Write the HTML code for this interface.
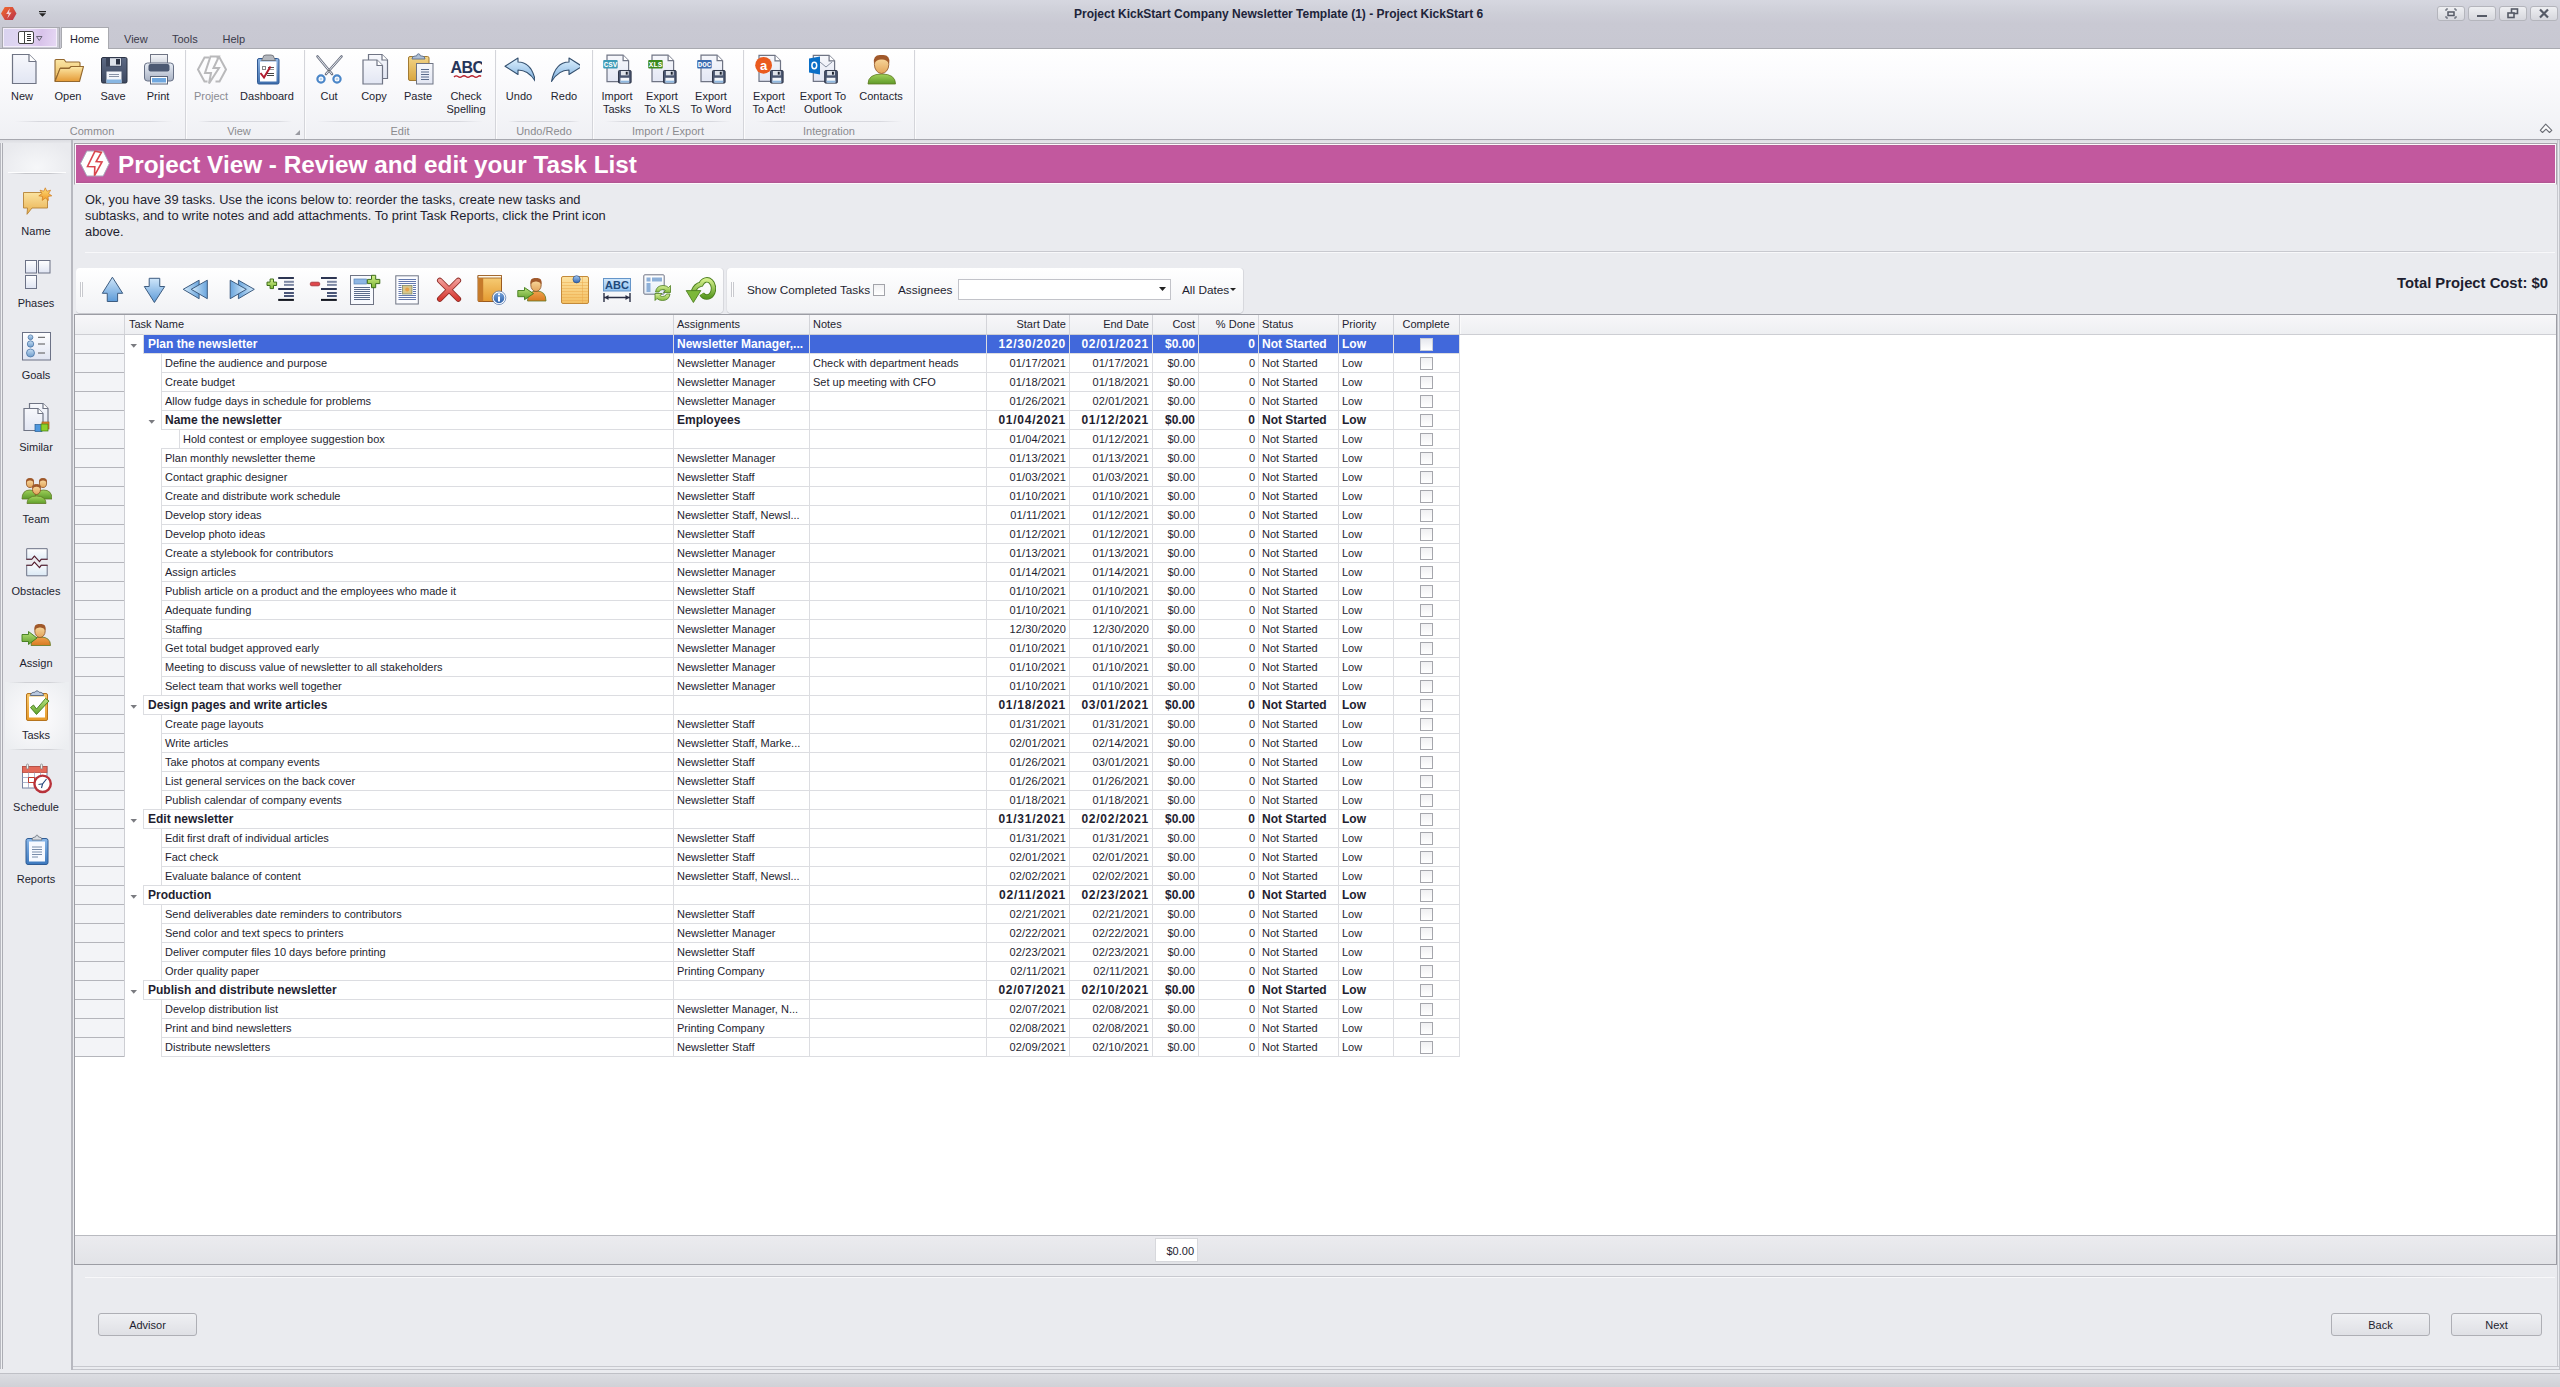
<!DOCTYPE html><html><head><meta charset="utf-8"><style>
*{box-sizing:border-box;margin:0;padding:0}
html,body{width:2560px;height:1387px;overflow:hidden;background:#eaebef;font-family:"Liberation Sans",sans-serif;color:#1e1e30;}
.a{position:absolute}
.t{position:absolute;white-space:nowrap;font-size:11px;line-height:13px}
.b{font-weight:bold}
.r{text-align:right}
.c{text-align:center}
.rl{position:absolute;font-size:11px;line-height:13px;text-align:center;white-space:nowrap;color:#1e1e30}
.gl{position:absolute;font-size:11px;line-height:13px;text-align:center;white-space:nowrap;color:#8b8b8f}
.ic{position:absolute}
</style></head><body><div class="a" style="left:0;top:0;width:2560px;height:49px;background:linear-gradient(#d6d7e0 0px,#cdced7 14px,#c9c9d3 24px,#c8c8d2 47px)"></div><div class="t b" style="left:1074px;top:7px;font-size:12px;line-height:15px;color:#20243a">Project KickStart Company Newsletter Template (1) - Project KickStart 6</div><svg class="ic" style="left:0px;top:4px" width="20" height="20" viewBox="0 0 20 20"><defs><linearGradient id="ap1" x1="0" y1="0" x2="1" y2="1"><stop offset="0" stop-color="#f46a2a"/><stop offset="1" stop-color="#b8324e"/></linearGradient></defs><path d="M1 9.5L4.8 3H12.8L16.5 9.5L12.8 16H4.8Z" fill="url(#ap1)"/><path d="M9.8 4.3L6.2 10H8.8L7.2 14.8L11.5 8.6H9Z" fill="#f4dbe4" opacity="0.95"/></svg><svg class="ic" style="left:38px;top:11px" width="9" height="8"><rect x="1" y="0" width="7" height="1.2" fill="#222"/><path d="M1 2.2 L8 2.2 L4.5 5.8 Z" fill="#222"/></svg><div class="a" style="left:2437px;top:6px;width:28px;height:15px;border:1px solid #b4b5bc;border-radius:3px;background:linear-gradient(#eeeff2,#d6d7dd)"></div><div class="a" style="left:2468px;top:6px;width:28px;height:15px;border:1px solid #b4b5bc;border-radius:3px;background:linear-gradient(#eeeff2,#d6d7dd)"></div><div class="a" style="left:2499px;top:6px;width:28px;height:15px;border:1px solid #b4b5bc;border-radius:3px;background:linear-gradient(#eeeff2,#d6d7dd)"></div><div class="a" style="left:2530px;top:6px;width:28px;height:15px;border:1px solid #b4b5bc;border-radius:3px;background:linear-gradient(#eeeff2,#d6d7dd)"></div><svg class="ic" style="left:2445px;top:8px" width="12" height="11"><path d="M1 3V1H3 M9 1H11V3 M11 8V10H9 M3 10H1V8" stroke="#555a66" stroke-width="1" fill="none"/><rect x="3" y="4" width="6" height="3.5" stroke="#555a66" stroke-width="1.5" fill="none"/></svg><div class="a" style="left:2477px;top:15px;width:10px;height:2px;background:#555a66"></div><svg class="ic" style="left:2507px;top:8px" width="12" height="11"><rect x="4.5" y="1" width="6" height="4.5" stroke="#555a66" stroke-width="1.6" fill="none"/><rect x="1" y="5" width="6" height="4.5" stroke="#555a66" stroke-width="1.6" fill="#dfe0e4"/></svg><svg class="ic" style="left:2538px;top:8px" width="12" height="11"><path d="M2 1.5L10 9.5M10 1.5L2 9.5" stroke="#555a66" stroke-width="2.2"/></svg><div class="a" style="left:2px;top:27px;width:58px;height:22px;border:1px solid #a9aab0;border-bottom:none;background:#c8c8d2"></div><div class="a" style="left:3px;top:28px;width:54px;height:19px;border:1px solid #f4eefa;background:linear-gradient(100deg,#d9d3ef 0%,#e2d6f3 45%,#d8c3ea 70%,#e6d8f4 100%)"></div><svg class="ic" style="left:18px;top:31px" width="30" height="14"><rect x="0.5" y="0.5" width="15" height="12" rx="1.5" fill="#fff" stroke="#444" stroke-width="1"/><line x1="6.5" y1="1" x2="6.5" y2="12" stroke="#444"/><rect x="9" y="3" width="4" height="1" fill="#333"/><rect x="9" y="5" width="4" height="1" fill="#333"/><rect x="9" y="7" width="4" height="1" fill="#333"/><rect x="9" y="9" width="4" height="1" fill="#333"/><path d="M18.5 5.5 L24 5.5 L21.25 9.5 Z" fill="none" stroke="#5a5a66" stroke-width="0.9"/></svg><div class="a" style="left:61px;top:27px;width:48px;height:22px;background:#fff;border:1px solid #a9aab0;border-bottom:none"></div><div class="t" style="left:70px;top:33px;color:#1e1e30">Home</div><div class="t" style="left:124px;top:33px;color:#3a3a4a">View</div><div class="t" style="left:172px;top:33px;color:#3a3a4a">Tools</div><div class="t" style="left:222.5px;top:33px;color:#3a3a4a">Help</div><div class="a" style="left:0;top:48px;width:2560px;height:92px;background:linear-gradient(#ffffff 0%,#fbfbfd 30%,#eff0f4 100%);border-top:1px solid #a9aab0;border-bottom:1px solid #a7a8af"></div><div class="a" style="left:61px;top:48px;width:47px;height:2px;background:#fff"></div><div class="a" style="left:185px;top:50px;width:1px;height:89px;background:#d4d5da"></div><div class="a" style="left:186px;top:50px;width:1px;height:89px;background:#fbfbfc"></div><div class="a" style="left:304px;top:50px;width:1px;height:89px;background:#d4d5da"></div><div class="a" style="left:305px;top:50px;width:1px;height:89px;background:#fbfbfc"></div><div class="a" style="left:495px;top:50px;width:1px;height:89px;background:#d4d5da"></div><div class="a" style="left:496px;top:50px;width:1px;height:89px;background:#fbfbfc"></div><div class="a" style="left:592px;top:50px;width:1px;height:89px;background:#d4d5da"></div><div class="a" style="left:593px;top:50px;width:1px;height:89px;background:#fbfbfc"></div><div class="a" style="left:743px;top:50px;width:1px;height:89px;background:#d4d5da"></div><div class="a" style="left:744px;top:50px;width:1px;height:89px;background:#fbfbfc"></div><div class="a" style="left:914px;top:50px;width:1px;height:89px;background:#d4d5da"></div><div class="a" style="left:915px;top:50px;width:1px;height:89px;background:#fbfbfc"></div><div class="a" style="left:15px;top:121px;width:158px;height:1px;background:linear-gradient(90deg,rgba(215,216,222,0),#d7d8de 15%,#d7d8de 85%,rgba(215,216,222,0))"></div><div class="gl" style="left:1px;top:125px;width:182px">Common</div><div class="a" style="left:198px;top:121px;width:94px;height:1px;background:linear-gradient(90deg,rgba(215,216,222,0),#d7d8de 15%,#d7d8de 85%,rgba(215,216,222,0))"></div><div class="gl" style="left:180px;top:125px;width:118px">View</div><div class="a" style="left:317px;top:121px;width:166px;height:1px;background:linear-gradient(90deg,rgba(215,216,222,0),#d7d8de 15%,#d7d8de 85%,rgba(215,216,222,0))"></div><div class="gl" style="left:305px;top:125px;width:190px">Edit</div><div class="a" style="left:508px;top:121px;width:72px;height:1px;background:linear-gradient(90deg,rgba(215,216,222,0),#d7d8de 15%,#d7d8de 85%,rgba(215,216,222,0))"></div><div class="gl" style="left:496px;top:125px;width:96px">Undo/Redo</div><div class="a" style="left:605px;top:121px;width:126px;height:1px;background:linear-gradient(90deg,rgba(215,216,222,0),#d7d8de 15%,#d7d8de 85%,rgba(215,216,222,0))"></div><div class="gl" style="left:593px;top:125px;width:150px">Import / Export</div><div class="a" style="left:756px;top:121px;width:146px;height:1px;background:linear-gradient(90deg,rgba(215,216,222,0),#d7d8de 15%,#d7d8de 85%,rgba(215,216,222,0))"></div><div class="gl" style="left:744px;top:125px;width:170px">Integration</div><svg class="ic" style="left:295px;top:130px" width="6" height="6"><path d="M5 0V5H0Z" fill="#9a9ba2"/></svg><svg class="ic" style="left:6px;top:53px" width="32" height="32" viewBox="0 0 32 32"><defs><linearGradient id="docg" x1="0" y1="0" x2="0" y2="1"><stop offset="0" stop-color="#f7f8fc"/><stop offset="1" stop-color="#e2e6f3"/></linearGradient></defs><path d="M6.5 1.5H23L30 8.5V30.5H6.5Z" fill="url(#docg)" stroke="#6f7484" stroke-width="1.2"/><path d="M23 1.5V8.5H30" fill="#fff" stroke="#6f7484" stroke-width="1.2"/></svg><div class="rl" style="left:-18px;top:90px;width:80px;color:#1e1e30">New</div><svg class="ic" style="left:52px;top:53px" width="32" height="32" viewBox="0 0 32 32"><defs><linearGradient id="fo1" x1="0" y1="0" x2="0" y2="1"><stop offset="0" stop-color="#fbe7a6"/><stop offset="1" stop-color="#e9b456"/></linearGradient></defs><defs><linearGradient id="fo2" x1="0" y1="0" x2="0" y2="1"><stop offset="0" stop-color="#fde9a8"/><stop offset="1" stop-color="#e59a35"/></linearGradient></defs><path d="M3 28V7.5Q3 6.5 4 6.5H12L14 9H27Q28 9 28 10V15H8.5Z" fill="url(#fo1)" stroke="#94682e" stroke-width="1.1"/><path d="M3 28.5L8 15.5H17L19 13.5H31.5L27.5 28.5Z" fill="url(#fo2)" stroke="#94682e" stroke-width="1.1" stroke-linejoin="round"/></svg><div class="rl" style="left:28px;top:90px;width:80px;color:#1e1e30">Open</div><svg class="ic" style="left:97px;top:53px" width="32" height="32" viewBox="0 0 32 32"><defs><linearGradient id="sv1" x1="0" y1="0" x2="0" y2="1"><stop offset="0" stop-color="#5d6a84"/><stop offset="1" stop-color="#3d4860"/></linearGradient></defs><rect x="4.5" y="4.5" width="25.5" height="25.5" rx="1.5" fill="url(#sv1)" stroke="#2b3243" stroke-width="1"/><rect x="9" y="4.5" width="15.5" height="9" fill="#3a4358"/><rect x="13" y="5.2" width="11" height="7.6" fill="#dde2ea"/><rect x="19" y="6" width="4" height="5.5" fill="#2a3142"/><rect x="9.5" y="18.5" width="15" height="11.5" fill="#f3f5fa"/><rect x="9.5" y="26.5" width="15" height="3.5" fill="#88b6e2"/><path d="M12 21.5H22M12 23.5H22" stroke="#6c7890" stroke-width="0.8"/></svg><div class="rl" style="left:73px;top:90px;width:80px;color:#1e1e30">Save</div><svg class="ic" style="left:142px;top:53px" width="32" height="32" viewBox="0 0 32 32"><defs><linearGradient id="pr1" x1="0" y1="0" x2="0" y2="1"><stop offset="0" stop-color="#f6f7fa"/><stop offset="1" stop-color="#c8cdd8"/></linearGradient></defs><defs><linearGradient id="pr2" x1="0" y1="0" x2="0" y2="1"><stop offset="0" stop-color="#e9eef6"/><stop offset="1" stop-color="#a9b2c4"/></linearGradient></defs><rect x="8.5" y="1.5" width="17" height="12" fill="url(#pr1)" stroke="#6f7484"/><rect x="2.5" y="10" width="29" height="18" rx="3" fill="url(#pr2)" stroke="#687186"/><rect x="6.5" y="11" width="21" height="7.5" rx="2" fill="#4c5973"/><rect x="8.5" y="23.5" width="17" height="7.5" fill="#fff" stroke="#5b6478"/><rect x="10" y="25" width="14" height="4.5" fill="#6fa7df"/></svg><div class="rl" style="left:118px;top:90px;width:80px;color:#1e1e30">Print</div><svg class="ic" style="left:195px;top:53px" width="32" height="32" viewBox="0 0 32 32"><g fill="none" stroke="#b9b9bb" stroke-width="2" stroke-linejoin="miter"><path d="M14 4.5H9.5L3 16.5L9.5 28.5H12.5"/><path d="M20.5 28.5H24.5L31 16.5L24.5 4.5H21.5"/><path d="M15.5 3.5H24L18.5 15H24L14 30.5L16 20H10Z"/></g></svg><div class="rl" style="left:171px;top:90px;width:80px;color:#8a8b92">Project</div><svg class="ic" style="left:251px;top:53px" width="32" height="32" viewBox="0 0 32 32"><defs><linearGradient id="db1" x1="0" y1="0" x2="0" y2="1"><stop offset="0" stop-color="#8fb5e2"/><stop offset="1" stop-color="#3f6fae"/></linearGradient></defs><rect x="6.5" y="5.5" width="21.5" height="25.5" rx="1.5" fill="url(#db1)" stroke="#2f5892"/><rect x="9" y="8.5" width="16.5" height="20" fill="#fff"/><path d="M12 4.5Q12 2 15 2H20Q23 2 23 4.5L24.5 7.5H10.5Z" fill="#b4b7bd" stroke="#6c6f76" stroke-width="0.9"/><rect x="11.5" y="13.5" width="3" height="3" fill="none" stroke="#888" stroke-width="1"/><rect x="17" y="14" width="6" height="1" fill="#555"/><rect x="17" y="16" width="6" height="1" fill="#999"/><rect x="16" y="20" width="7" height="1" fill="#444"/><rect x="16" y="22" width="7" height="1" fill="#444"/><path d="M9.5 20L13 24.5L19.5 13.5" fill="none" stroke="#b01d2e" stroke-width="2"/></svg><div class="rl" style="left:227px;top:90px;width:80px;color:#1e1e30">Dashboard</div><svg class="ic" style="left:313px;top:53px" width="32" height="32" viewBox="0 0 32 32"><defs><linearGradient id="ct1" x1="0" y1="0" x2="0" y2="1"><stop offset="0" stop-color="#f1f4fa"/><stop offset="1" stop-color="#aeb7c6"/></linearGradient></defs><path d="M4.5 3.5L19 21M28.5 3.5L13 21" stroke="#6d7382" stroke-width="2.6" stroke-linecap="round"/><path d="M4.5 3.5L19 21M28.5 3.5L13 21" stroke="#e8ecf3" stroke-width="1"/><circle cx="8" cy="26" r="3.6" fill="none" stroke="#4a86c8" stroke-width="2.2"/><circle cx="24" cy="26" r="3.6" fill="none" stroke="#4a86c8" stroke-width="2.2"/><circle cx="8" cy="26" r="1.3" fill="#bcd6f0"/><circle cx="24" cy="26" r="1.3" fill="#bcd6f0"/><circle cx="16" cy="17.5" r="0.9" fill="#555"/></svg><div class="rl" style="left:289px;top:90px;width:80px;color:#1e1e30">Cut</div><svg class="ic" style="left:358px;top:53px" width="32" height="32" viewBox="0 0 32 32"><defs><linearGradient id="docg" x1="0" y1="0" x2="0" y2="1"><stop offset="0" stop-color="#f7f8fc"/><stop offset="1" stop-color="#e2e6f3"/></linearGradient></defs><path d="M10.5 1.5H24.0L29.5 7.0V25.5H10.5Z" fill="url(#docg)" stroke="#6f7484" stroke-width="1.2"/><path d="M24.0 1.5V7.0H29.5" fill="#fff" stroke="#6f7484" stroke-width="1.2"/><path d="M5 7H19.0L24.5 12.5V31H5Z" fill="url(#docg)" stroke="#6f7484" stroke-width="1.2"/><path d="M19.0 7V12.5H24.5" fill="#fff" stroke="#6f7484" stroke-width="1.2"/></svg><div class="rl" style="left:334px;top:90px;width:80px;color:#1e1e30">Copy</div><svg class="ic" style="left:402px;top:53px" width="32" height="32" viewBox="0 0 32 32"><defs><linearGradient id="ps1" x1="0" y1="0" x2="0" y2="1"><stop offset="0" stop-color="#f2d488"/><stop offset="1" stop-color="#d9a640"/></linearGradient></defs><defs><linearGradient id="docg" x1="0" y1="0" x2="0" y2="1"><stop offset="0" stop-color="#f7f8fc"/><stop offset="1" stop-color="#e2e6f3"/></linearGradient></defs><rect x="6.5" y="3.5" width="20.5" height="24" rx="1.5" fill="url(#ps1)" stroke="#a27b33"/><path d="M10 6Q10 3 13 3H14.5Q15 0.8 16.5 0.8Q18 0.8 18.5 3H20Q23 3 23 6Z" fill="#aebfd6" stroke="#5d6f8a" stroke-width="0.9"/><rect x="14.5" y="10.5" width="16.5" height="20.5" fill="url(#docg)" stroke="#6f7484"/><path d="M19 16.5H27M19 19H27M19 21.5H27M19 24H27M19 26.5H27" stroke="#5a6b8a" stroke-width="1"/></svg><div class="rl" style="left:378px;top:90px;width:80px;color:#1e1e30">Paste</div><svg class="ic" style="left:450px;top:53px" width="32" height="32" viewBox="0 0 32 32"><text x="17" y="20" text-anchor="middle" font-family="Liberation Sans" font-weight="bold" font-size="16" fill="#26355a" letter-spacing="-0.5">ABC</text><path d="M4 24Q6 22 8 23.5T12 23.5T16 23.5T20 23.5T24 23.5T28 23.5T31 23.5" fill="none" stroke="#b8222e" stroke-width="1.4"/></svg><div class="rl" style="left:426px;top:90px;width:80px;color:#1e1e30">Check</div><div class="rl" style="left:426px;top:103px;width:80px;color:#1e1e30">Spelling</div><svg class="ic" style="left:503px;top:53px" width="32" height="32" viewBox="0 0 32 32"><defs><linearGradient id="ud1" x1="0" y1="0" x2="0" y2="1"><stop offset="0" stop-color="#dff2ff"/><stop offset="1" stop-color="#79acdd"/></linearGradient></defs><path d="M2 13.3L15 5V9C24 9 30 15.5 32.5 28.5C28 21 22.5 17 15 17V21.5Z" fill="url(#ud1)" stroke="#34506f" stroke-width="1.1" stroke-linejoin="round"/></svg><div class="rl" style="left:479px;top:90px;width:80px;color:#1e1e30">Undo</div><svg class="ic" style="left:548px;top:53px" width="32" height="32" viewBox="0 0 32 32"><defs><linearGradient id="ud2" x1="0" y1="0" x2="0" y2="1"><stop offset="0" stop-color="#dff2ff"/><stop offset="1" stop-color="#79acdd"/></linearGradient></defs><path transform="translate(36,0) scale(-1,1)" d="M2 13.3L15 5V9C24 9 30 15.5 32.5 28.5C28 21 22.5 17 15 17V21.5Z" fill="url(#ud2)" stroke="#34506f" stroke-width="1.1" stroke-linejoin="round"/></svg><div class="rl" style="left:524px;top:90px;width:80px;color:#1e1e30">Redo</div><svg class="ic" style="left:601px;top:53px" width="32" height="32" viewBox="0 0 32 32"><defs><linearGradient id="docg" x1="0" y1="0" x2="0" y2="1"><stop offset="0" stop-color="#f7f8fc"/><stop offset="1" stop-color="#e2e6f3"/></linearGradient></defs><path d="M6 2.2H22.1L27.6 7.7V28.7H6Z" fill="url(#docg)" stroke="#6f7484" stroke-width="1.2"/><path d="M22.1 2.2V7.7H27.6" fill="#fff" stroke="#6f7484" stroke-width="1.2"/><rect x="2.2" y="7" width="14.5" height="8.6" rx="1" fill="#3d9ab6"/><text x="9.5" y="14.2" text-anchor="middle" font-family="Liberation Mono" font-weight="bold" font-size="7.5" fill="#fff">CSV</text><g transform="translate(17,17) scale(0.9714285714285714)"><rect x="0.5" y="0.5" width="13" height="13" rx="1" fill="#4a5670" stroke="#2c3446"/><rect x="3" y="1" width="8" height="4.5" fill="#dfe3ea"/><rect x="8" y="1.8" width="2" height="3" fill="#1d2330"/><rect x="2.5" y="8" width="9" height="5" fill="#f4f6fa"/><rect x="2.5" y="11" width="9" height="2" fill="#8fb8e0"/></g></svg><div class="rl" style="left:577px;top:90px;width:80px;color:#1e1e30">Import</div><div class="rl" style="left:577px;top:103px;width:80px;color:#1e1e30">Tasks</div><svg class="ic" style="left:646px;top:53px" width="32" height="32" viewBox="0 0 32 32"><defs><linearGradient id="docg" x1="0" y1="0" x2="0" y2="1"><stop offset="0" stop-color="#f7f8fc"/><stop offset="1" stop-color="#e2e6f3"/></linearGradient></defs><path d="M6 2.2H22.1L27.6 7.7V28.7H6Z" fill="url(#docg)" stroke="#6f7484" stroke-width="1.2"/><path d="M22.1 2.2V7.7H27.6" fill="#fff" stroke="#6f7484" stroke-width="1.2"/><rect x="2.2" y="7" width="14.5" height="8.6" rx="1" fill="#3b8a1c"/><text x="9.5" y="14.2" text-anchor="middle" font-family="Liberation Mono" font-weight="bold" font-size="7.5" fill="#fff">XLS</text><g transform="translate(17,17) scale(0.9714285714285714)"><rect x="0.5" y="0.5" width="13" height="13" rx="1" fill="#4a5670" stroke="#2c3446"/><rect x="3" y="1" width="8" height="4.5" fill="#dfe3ea"/><rect x="8" y="1.8" width="2" height="3" fill="#1d2330"/><rect x="2.5" y="8" width="9" height="5" fill="#f4f6fa"/><rect x="2.5" y="11" width="9" height="2" fill="#8fb8e0"/></g></svg><div class="rl" style="left:622px;top:90px;width:80px;color:#1e1e30">Export</div><div class="rl" style="left:622px;top:103px;width:80px;color:#1e1e30">To XLS</div><svg class="ic" style="left:695px;top:53px" width="32" height="32" viewBox="0 0 32 32"><defs><linearGradient id="docg" x1="0" y1="0" x2="0" y2="1"><stop offset="0" stop-color="#f7f8fc"/><stop offset="1" stop-color="#e2e6f3"/></linearGradient></defs><path d="M6 2.2H22.1L27.6 7.7V28.7H6Z" fill="url(#docg)" stroke="#6f7484" stroke-width="1.2"/><path d="M22.1 2.2V7.7H27.6" fill="#fff" stroke="#6f7484" stroke-width="1.2"/><rect x="2.2" y="7" width="14.5" height="8.6" rx="1" fill="#3a6cb0"/><text x="9.5" y="14.2" text-anchor="middle" font-family="Liberation Mono" font-weight="bold" font-size="7.5" fill="#fff">DOC</text><g transform="translate(17,17) scale(0.9714285714285714)"><rect x="0.5" y="0.5" width="13" height="13" rx="1" fill="#4a5670" stroke="#2c3446"/><rect x="3" y="1" width="8" height="4.5" fill="#dfe3ea"/><rect x="8" y="1.8" width="2" height="3" fill="#1d2330"/><rect x="2.5" y="8" width="9" height="5" fill="#f4f6fa"/><rect x="2.5" y="11" width="9" height="2" fill="#8fb8e0"/></g></svg><div class="rl" style="left:671px;top:90px;width:80px;color:#1e1e30">Export</div><div class="rl" style="left:671px;top:103px;width:80px;color:#1e1e30">To Word</div><svg class="ic" style="left:753px;top:53px" width="32" height="32" viewBox="0 0 32 32"><defs><linearGradient id="docg" x1="0" y1="0" x2="0" y2="1"><stop offset="0" stop-color="#f7f8fc"/><stop offset="1" stop-color="#e2e6f3"/></linearGradient></defs><path d="M6 2.3H22.0L27.5 7.8V28.3H6Z" fill="url(#docg)" stroke="#6f7484" stroke-width="1.2"/><path d="M22.0 2.3V7.8H27.5" fill="#fff" stroke="#6f7484" stroke-width="1.2"/><circle cx="10.6" cy="12.3" r="8.4" fill="#ea5a1e"/><text x="10.6" y="16.6" text-anchor="middle" font-family="Liberation Sans" font-weight="bold" font-size="13" fill="#fff">a</text><g transform="translate(17,17) scale(0.9714285714285714)"><rect x="0.5" y="0.5" width="13" height="13" rx="1" fill="#4a5670" stroke="#2c3446"/><rect x="3" y="1" width="8" height="4.5" fill="#dfe3ea"/><rect x="8" y="1.8" width="2" height="3" fill="#1d2330"/><rect x="2.5" y="8" width="9" height="5" fill="#f4f6fa"/><rect x="2.5" y="11" width="9" height="2" fill="#8fb8e0"/></g></svg><div class="rl" style="left:729px;top:90px;width:80px;color:#1e1e30">Export</div><div class="rl" style="left:729px;top:103px;width:80px;color:#1e1e30">To Act!</div><svg class="ic" style="left:807px;top:53px" width="32" height="32" viewBox="0 0 32 32"><defs><linearGradient id="docg" x1="0" y1="0" x2="0" y2="1"><stop offset="0" stop-color="#f7f8fc"/><stop offset="1" stop-color="#e2e6f3"/></linearGradient></defs><path d="M6.3 2.3H22.1L27.6 7.8V28.3H6.3Z" fill="url(#docg)" stroke="#6f7484" stroke-width="1.2"/><path d="M22.1 2.3V7.8H27.6" fill="#fff" stroke="#6f7484" stroke-width="1.2"/><path d="M13 9L19 14L25 9" fill="none" stroke="#7a8396" stroke-width="0.9"/><path d="M2 5.5L13 3.5V21.5L2 19.5Z" fill="#0a6fc7"/><ellipse cx="7.3" cy="12.5" rx="2.4" ry="3.2" fill="none" stroke="#fff" stroke-width="1.5"/><g transform="translate(17.2,17) scale(0.9714285714285714)"><rect x="0.5" y="0.5" width="13" height="13" rx="1" fill="#4a5670" stroke="#2c3446"/><rect x="3" y="1" width="8" height="4.5" fill="#dfe3ea"/><rect x="8" y="1.8" width="2" height="3" fill="#1d2330"/><rect x="2.5" y="8" width="9" height="5" fill="#f4f6fa"/><rect x="2.5" y="11" width="9" height="2" fill="#8fb8e0"/></g></svg><div class="rl" style="left:783px;top:90px;width:80px;color:#1e1e30">Export To</div><div class="rl" style="left:783px;top:103px;width:80px;color:#1e1e30">Outlook</div><svg class="ic" style="left:865px;top:53px" width="32" height="32" viewBox="0 0 32 32"><defs><linearGradient id="ctb" x1="0" y1="0" x2="0" y2="1"><stop offset="0" stop-color="#a3d15a"/><stop offset="1" stop-color="#5f9a2a"/></linearGradient></defs><defs><linearGradient id="ctf" x1="0" y1="0" x2="0" y2="1"><stop offset="0" stop-color="#fbe0a8"/><stop offset="1" stop-color="#e3a45a"/></linearGradient></defs><path d="M3 31Q3 21 16.75 21Q30.5 21 30.5 31Z" fill="url(#ctb)" stroke="#5f7a23" stroke-width="0.8"/><ellipse cx="16.6" cy="11.5" rx="7.2" ry="9" fill="url(#ctf)" stroke="#8a4f22" stroke-width="0.8"/><path d="M8.950000000000003 10.6Q7.600000000000001 1.1500000000000004 16.6 2.049999999999999Q25.6 1.1500000000000004 24.25 10.6Q21.1 6.1000000000000005 16.6 6.55Q12.100000000000001 6.1000000000000005 8.950000000000003 10.6Z" fill="#a0582a"/></svg><div class="rl" style="left:841px;top:90px;width:80px;color:#1e1e30">Contacts</div><svg class="ic" style="left:2537px;top:122px" width="18" height="14"><path d="M8.7 2.2L14.8 8.3L12.5 10.5L9 7.2L5.5 10.5L3.3 8.3Z" stroke="#6b6e76" stroke-width="1.1" fill="#fbfbfc" stroke-linejoin="round"/></svg><div class="a" style="left:0;top:140px;width:2560px;height:4px;background:linear-gradient(#dcdde2,#e9eaee)"></div><div class="a" style="left:0;top:143px;width:3px;height:1226px;background:linear-gradient(90deg,#b8b9c0 0px,#b8b9c0 1px,#eeeff2 1px,#eeeff2 2px,#acadb4 2px)"></div><div class="a" style="left:3px;top:143px;width:69px;height:1225px;background:#eaebef;border-right:1px solid #c9cacf"></div><div class="a" style="left:71px;top:140px;width:2px;height:1230px;background:#b7b8bf"></div><div class="a" style="left:3px;top:143px;width:68px;height:30px;background:radial-gradient(ellipse at 50% 80%,#f6f7f9,#e9eaee 80%)"></div><div class="a" style="left:8px;top:173px;width:58px;height:1px;background:linear-gradient(90deg,rgba(200,201,206,0),#c4c5ca 30%,#c4c5ca 70%,rgba(200,201,206,0))"></div><div class="a" style="left:8px;top:172px;width:58px;height:1px;background:#fdfdfe"></div><svg class="ic" style="left:20px;top:186px" width="32" height="32" viewBox="0 0 32 32"><defs><linearGradient id="nm1" x1="0" y1="0" x2="0" y2="1"><stop offset="0" stop-color="#fbe3a0"/><stop offset="1" stop-color="#e9b04e"/></linearGradient></defs><defs><linearGradient id="nm2" x1="0" y1="0" x2="0" y2="1"><stop offset="0" stop-color="#fde07a"/><stop offset="1" stop-color="#f09a2a"/></linearGradient></defs><path d="M3.5 6.5H27.5V22H12L7 28.3L7.5 22H3.5Z" fill="url(#nm1)" stroke="#b68236" stroke-width="0.9" stroke-linejoin="round"/><path d="M25.3 1.8L26.8 5.2L30.6 4.2L28.6 7.6L31.8 9.8L28 10.5L28.4 14.4L25.3 12L22.2 14.4L22.6 10.5L18.8 9.8L22 7.6L20 4.2L23.8 5.2Z" fill="url(#nm2)" stroke="#d07a1e" stroke-width="0.7"/></svg><div class="rl" style="left:0px;top:225px;width:72px">Name</div><svg class="ic" style="left:20px;top:258px" width="32" height="32" viewBox="0 0 32 32"><defs><linearGradient id="sqg" x1="0" y1="0" x2="0" y2="1"><stop offset="0" stop-color="#ffffff"/><stop offset="1" stop-color="#dfe4f2"/></linearGradient></defs><g fill="url(#sqg)" stroke="#6c7286" stroke-width="1"><rect x="5.5" y="2.5" width="11" height="12.5"/><rect x="18.5" y="2.5" width="11.5" height="12.5"/><rect x="5.5" y="17.5" width="11" height="13"/></g></svg><div class="rl" style="left:0px;top:297px;width:72px">Phases</div><svg class="ic" style="left:20px;top:330px" width="32" height="32" viewBox="0 0 32 32"><defs><linearGradient id="sqg" x1="0" y1="0" x2="0" y2="1"><stop offset="0" stop-color="#ffffff"/><stop offset="1" stop-color="#dfe4f2"/></linearGradient></defs><defs><linearGradient id="gl1" x1="0" y1="0" x2="0" y2="1"><stop offset="0" stop-color="#c6def4"/><stop offset="1" stop-color="#6d9ccc"/></linearGradient></defs><rect x="2.5" y="2.5" width="28" height="27.5" fill="url(#sqg)" stroke="#6c7286"/><g fill="url(#gl1)" stroke="#4d76a6" stroke-width="0.8"><circle cx="10.5" cy="7.3" r="2.4"/><circle cx="10.5" cy="14" r="3.2"/><circle cx="10.5" cy="23" r="4"/></g><path d="M18 7.3H25M18 14H25M18 23H25" stroke="#555" stroke-width="1"/></svg><div class="rl" style="left:0px;top:369px;width:72px">Goals</div><svg class="ic" style="left:20px;top:402px" width="32" height="32" viewBox="0 0 32 32"><defs><linearGradient id="docg" x1="0" y1="0" x2="0" y2="1"><stop offset="0" stop-color="#f7f8fc"/><stop offset="1" stop-color="#e2e6f3"/></linearGradient></defs><path d="M9.5 1.5H23L28 6.5V22.5H9.5Z" fill="url(#docg)" stroke="#6f7484" stroke-width="1.2"/><path d="M23 1.5V6.5H28" fill="#fff" stroke="#6f7484" stroke-width="1.2"/><path d="M4 6.5H18L23 11.5V28.5H4Z" fill="url(#docg)" stroke="#6f7484" stroke-width="1.2"/><path d="M18 6.5V11.5H23" fill="#fff" stroke="#6f7484" stroke-width="1.2"/><rect x="22" y="20" width="7" height="7" fill="#e98b2c" stroke="#a45a15" stroke-width="0.7"/><rect x="15" y="22.5" width="7" height="7" fill="#4e97de" stroke="#245b92" stroke-width="0.7"/><rect x="21" y="22" width="7" height="7" fill="#8fcf2a" stroke="#3e7a12" stroke-width="0.7"/></svg><div class="rl" style="left:0px;top:441px;width:72px">Similar</div><svg class="ic" style="left:20px;top:474px" width="32" height="32" viewBox="0 0 32 32"><defs><linearGradient id="tm1b" x1="0" y1="0" x2="0" y2="1"><stop offset="0" stop-color="#9fd05a"/><stop offset="1" stop-color="#5c9a2a"/></linearGradient></defs><defs><linearGradient id="tm1f" x1="0" y1="0" x2="0" y2="1"><stop offset="0" stop-color="#fbe0a8"/><stop offset="1" stop-color="#e3a45a"/></linearGradient></defs><path d="M2 25Q2 16 10.0 16Q18 16 18 25Z" fill="url(#tm1b)" stroke="#5f7a23" stroke-width="0.8"/><ellipse cx="10" cy="9" rx="3.6" ry="4.5" fill="url(#tm1f)" stroke="#8a4f22" stroke-width="0.8"/><path d="M6.175000000000001 8.55Q5.5 3.825 10 4.2749999999999995Q14.5 3.825 13.825 8.55Q12.25 6.300000000000001 10 6.525Q7.75 6.300000000000001 6.175000000000001 8.55Z" fill="#a0582a"/><defs><linearGradient id="tm2b" x1="0" y1="0" x2="0" y2="1"><stop offset="0" stop-color="#9fd05a"/><stop offset="1" stop-color="#5c9a2a"/></linearGradient></defs><defs><linearGradient id="tm2f" x1="0" y1="0" x2="0" y2="1"><stop offset="0" stop-color="#fbe0a8"/><stop offset="1" stop-color="#e3a45a"/></linearGradient></defs><path d="M15 25Q15 16 23.5 16Q32 16 32 25Z" fill="url(#tm2b)" stroke="#5f7a23" stroke-width="0.8"/><ellipse cx="23" cy="9" rx="3.6" ry="4.5" fill="url(#tm2f)" stroke="#8a4f22" stroke-width="0.8"/><path d="M19.175 8.55Q18.5 3.825 23 4.2749999999999995Q27.5 3.825 26.825 8.55Q25.25 6.300000000000001 23 6.525Q20.75 6.300000000000001 19.175 8.55Z" fill="#a0582a"/><defs><linearGradient id="tm3b" x1="0" y1="0" x2="0" y2="1"><stop offset="0" stop-color="#a6d65e"/><stop offset="1" stop-color="#5f9e2b"/></linearGradient></defs><defs><linearGradient id="tm3f" x1="0" y1="0" x2="0" y2="1"><stop offset="0" stop-color="#fbe0a8"/><stop offset="1" stop-color="#e3a45a"/></linearGradient></defs><path d="M7 29.5Q7 22 16.5 22Q26 22 26 29.5Z" fill="url(#tm3b)" stroke="#5f7a23" stroke-width="0.8"/><ellipse cx="16.5" cy="15.5" rx="4.0" ry="5" fill="url(#tm3f)" stroke="#8a4f22" stroke-width="0.8"/><path d="M12.25 15.0Q11.5 9.75 16.5 10.25Q21.5 9.75 20.75 15.0Q19.0 12.5 16.5 12.75Q14.0 12.5 12.25 15.0Z" fill="#a0582a"/></svg><div class="rl" style="left:0px;top:513px;width:72px">Team</div><svg class="ic" style="left:20px;top:546px" width="32" height="32" viewBox="0 0 32 32"><defs><linearGradient id="ob1" x1="0" y1="0" x2="0" y2="1"><stop offset="0" stop-color="#ffffff"/><stop offset="1" stop-color="#dbe9f5"/></linearGradient></defs><path d="M6.7 13.3V2.7H27.2V13.3H21.2L19.5 15.6L14.4 10.1L11.8 13.3Z" fill="url(#ob1)" stroke="#6c7286" stroke-width="1"/><path d="M6.7 19.3H11.8L14.4 16.1L19.5 21.6L21.2 19.3H27.2V29.8H6.7Z" fill="url(#ob1)" stroke="#6c7286" stroke-width="1"/><path d="M6.2 13.3H11.8L14.4 10.1L19.5 15.6L21.2 13.3H27.7M6.2 19.3H11.8L14.4 16.1L19.5 21.6L21.2 19.3H27.7" fill="none" stroke="#5a2030" stroke-width="1.1"/></svg><div class="rl" style="left:0px;top:585px;width:72px">Obstacles</div><svg class="ic" style="left:20px;top:618px" width="32" height="32" viewBox="0 0 32 32"><defs><linearGradient id="asb" x1="0" y1="0" x2="0" y2="1"><stop offset="0" stop-color="#f0a14e"/><stop offset="1" stop-color="#d77a20"/></linearGradient></defs><defs><linearGradient id="asf" x1="0" y1="0" x2="0" y2="1"><stop offset="0" stop-color="#fbe0a8"/><stop offset="1" stop-color="#e3a45a"/></linearGradient></defs><path d="M11 27.5Q11 19 20.75 19Q30.5 19 30.5 27.5Z" fill="url(#asb)" stroke="#5f7a23" stroke-width="0.8"/><ellipse cx="20" cy="13" rx="5.2" ry="6.5" fill="url(#asf)" stroke="#8a4f22" stroke-width="0.8"/><path d="M14.475000000000001 12.35Q13.5 5.525 20 6.175Q26.5 5.525 25.525 12.35Q23.25 9.1 20 9.425Q16.75 9.1 14.475000000000001 12.35Z" fill="#a0582a"/><defs><linearGradient id="ar1" x1="0" y1="0" x2="0" y2="1"><stop offset="0" stop-color="#b8e27a"/><stop offset="1" stop-color="#5f9e2b"/></linearGradient></defs><path d="M2 16.5H8.5V13.5L17 20L8.5 26.5V23.5H2Z" fill="url(#ar1)" stroke="#3f7a1a" stroke-width="0.9" stroke-linejoin="round"/></svg><div class="rl" style="left:0px;top:657px;width:72px">Assign</div><div class="a" style="left:5px;top:682px;width:64px;height:68px;background:radial-gradient(ellipse at 50% 50%,#f8f8fa 30%,#eceef1 90%)"></div><div class="a" style="left:8px;top:682px;width:58px;height:1px;background:linear-gradient(90deg,rgba(200,201,206,0),#cfd0d5 30%,#cfd0d5 70%,rgba(200,201,206,0))"></div><div class="a" style="left:8px;top:749px;width:58px;height:1px;background:linear-gradient(90deg,rgba(200,201,206,0),#cfd0d5 30%,#cfd0d5 70%,rgba(200,201,206,0))"></div><svg class="ic" style="left:20px;top:690px" width="32" height="32" viewBox="0 0 32 32"><defs><linearGradient id="tk1" x1="0" y1="0" x2="0" y2="1"><stop offset="0" stop-color="#f7c76a"/><stop offset="1" stop-color="#e79a2a"/></linearGradient></defs><defs><linearGradient id="tk2" x1="0" y1="0" x2="0" y2="1"><stop offset="0" stop-color="#b9e37e"/><stop offset="1" stop-color="#5fa22c"/></linearGradient></defs><rect x="6.5" y="3.5" width="21" height="27" rx="1.5" fill="url(#tk1)" stroke="#b6741e"/><rect x="9" y="6.5" width="16" height="21" fill="#fff"/><path d="M10.5 5.5Q10.5 2.2 15 2.2Q15.8 0.8 17 0.8Q18.2 0.8 19 2.2Q23.5 2.2 23.5 5.5Z" fill="#b9c9e0" stroke="#56677f" stroke-width="0.9"/><path d="M10.5 17.5L13.5 15L16.5 19L25.5 8.5L29 11L16.5 24.5Z" fill="url(#tk2)" stroke="#3f7a1a" stroke-width="0.9" stroke-linejoin="round"/></svg><div class="rl" style="left:0px;top:729px;width:72px">Tasks</div><svg class="ic" style="left:20px;top:762px" width="32" height="32" viewBox="0 0 32 32"><rect x="2.5" y="4.5" width="24.5" height="21.5" fill="#fff" stroke="#7782a0"/><rect x="2.5" y="4.5" width="24.5" height="6" fill="#e36a5a" stroke="#b84a3c" stroke-width="0.8"/><path d="M2.5 15.5H27M2.5 20.5H27M8.5 10.5V26M14.5 10.5V26M20.5 10.5V26" stroke="#9aa4bf" stroke-width="0.8"/><path d="M8.5 15.5H14.5V20.5H8.5Z" fill="none" stroke="#c0392b" stroke-width="1"/><rect x="6.5" y="2" width="2" height="5" rx="1" fill="#eee" stroke="#777" stroke-width="0.6"/><rect x="20.5" y="2" width="2" height="5" rx="1" fill="#eee" stroke="#777" stroke-width="0.6"/><circle cx="22.6" cy="21.8" r="8.2" fill="#fff" stroke="#b8323a" stroke-width="2.4"/><path d="M22.6 21.8L26.5 17M22.6 21.8L18.5 22.5M22.6 21.8L21.5 26" stroke="#23457a" stroke-width="1.1"/></svg><div class="rl" style="left:0px;top:801px;width:72px">Schedule</div><svg class="ic" style="left:20px;top:834px" width="32" height="32" viewBox="0 0 32 32"><defs><linearGradient id="rp1" x1="0" y1="0" x2="0" y2="1"><stop offset="0" stop-color="#8ab8ea"/><stop offset="1" stop-color="#3c78be"/></linearGradient></defs><rect x="6" y="4.5" width="22" height="26" rx="2" fill="url(#rp1)" stroke="#2f5c95"/><rect x="9" y="7.5" width="16" height="20" fill="#f6f9ff"/><path d="M12 6Q12 3 15 3H15.5Q16 1 17 1Q18 1 18.5 3H19Q22 3 22 6Z" fill="#d9dde3" stroke="#6c737d" stroke-width="0.8"/><path d="M12 13H22M12 15.5H22M12 18H22M12 20.5H22M12 23H18" stroke="#6a7fa0" stroke-width="0.9"/></svg><div class="rl" style="left:0px;top:873px;width:72px">Reports</div><div class="a" style="left:73px;top:140px;width:2487px;height:1230px;border-right:1px solid #c4c5cb;border-bottom:1px solid #c4c5cb"></div><div class="a" style="left:73px;top:1366px;width:2486px;height:1px;background:#c7c8ce"></div><div class="a" style="left:2557px;top:140px;width:1px;height:1227px;background:#c7c8ce"></div><div class="a" style="left:74px;top:143px;width:2483px;height:42px;border:1px solid #a9a3ad;border-bottom-color:#e9eaee;background:#fdf7fb"></div><div class="a" style="left:76px;top:145px;width:2479px;height:38px;background:linear-gradient(#b25a92 0px,#c2589e 1.5px,#c2589e 36px,#ad5590 38px)"></div><svg class="ic" style="left:79px;top:147px" width="32" height="34" viewBox="0 0 32 34"><path d="M1.5 16.5L7.8 4H24.2L30.3 16.5L24.2 29H7.8Z" fill="#fff" stroke="#a7a2b8" stroke-width="1"/><path d="M16 4.2L22.4 5.4L17.2 14.6L23 14.9L15.5 28.7L15.8 19.8L8.5 19.5Z" fill="#fff" stroke="#d9464e" stroke-width="1.6" stroke-linejoin="miter"/></svg><div class="t b" style="left:118px;top:151px;font-size:24.3px;line-height:28px;color:#fff">Project View - Review and edit your Task List</div><div class="t" style="left:85px;top:192px;font-size:12.85px;line-height:15px">Ok, you have 39 tasks. Use the icons below to: reorder the tasks, create new tasks and</div><div class="t" style="left:85px;top:208px;font-size:12.85px;line-height:15px">subtasks, and to write notes and add attachments. To print Task Reports, click the Print icon</div><div class="t" style="left:85px;top:224px;font-size:12.85px;line-height:15px">above.</div><div class="a" style="left:85px;top:251px;width:2470px;height:1px;background:linear-gradient(90deg,rgba(200,201,207,0),#c8c9cf 10%,#c8c9cf 95%,rgba(200,201,207,0))"></div><div class="a" style="left:85px;top:252px;width:2470px;height:1px;background:#f8f8fa"></div><div class="a" style="left:76px;top:268px;width:647px;height:45px;border-radius:4px;background:linear-gradient(#ffffff,#f1f2f5);box-shadow:0 1px 0 #c8c9ce,1px 0 0 #d7d8dd"></div><div class="a" style="left:80px;top:282px;width:3px;height:15px;background:repeating-linear-gradient(90deg,#c8c9ce 0 1px,#fff 1px 2px)"></div><svg class="ic" style="left:96px;top:274px" width="32" height="32" viewBox="0 0 32 32"><defs><linearGradient id="arg" x1="0" y1="0" x2="0" y2="1"><stop offset="0" stop-color="#cfe6fa"/><stop offset="1" stop-color="#5d9bd8"/></linearGradient></defs><path d="M16.4 3.2L26.7 19.3H21.6V27.5H11.25V19.3H6.3Z" fill="url(#arg)" stroke="#3d5c80" stroke-width="1" stroke-linejoin="miter"/></svg><svg class="ic" style="left:138px;top:274px" width="32" height="32" viewBox="0 0 32 32"><defs><linearGradient id="arg" x1="0" y1="0" x2="0" y2="1"><stop offset="0" stop-color="#cfe6fa"/><stop offset="1" stop-color="#5d9bd8"/></linearGradient></defs><path d="M11.2 4.3H21.75V12.5H26.7L16.4 28.5L6.3 12.5H11.2Z" fill="url(#arg)" stroke="#3d5c80" stroke-width="1"/></svg><svg class="ic" style="left:180px;top:274px" width="32" height="32" viewBox="0 0 32 32"><defs><linearGradient id="arh" x1="0" y1="0" x2="1" y2="0"><stop offset="0" stop-color="#d6ecfc"/><stop offset="1" stop-color="#6aa5dd"/></linearGradient></defs><path d="M3.2 15.3L19.1 6.2V24.7Z" fill="url(#arh)" stroke="#3d5c80" stroke-width="1"/><path d="M11.2 15.3L27.3 6.2V24.7Z" fill="url(#arh)" stroke="#3d5c80" stroke-width="1"/></svg><svg class="ic" style="left:223px;top:274px" width="32" height="32" viewBox="0 0 32 32"><g transform="translate(34.5,0) scale(-1,1)"><defs><linearGradient id="arh2" x1="0" y1="0" x2="1" y2="0"><stop offset="0" stop-color="#d6ecfc"/><stop offset="1" stop-color="#6aa5dd"/></linearGradient></defs><path d="M3.2 15.3L19.1 6.2V24.7Z" fill="url(#arh2)" stroke="#3d5c80" stroke-width="1"/><path d="M11.2 15.3L27.3 6.2V24.7Z" fill="url(#arh2)" stroke="#3d5c80" stroke-width="1"/></g></svg><svg class="ic" style="left:265px;top:274px" width="32" height="32" viewBox="0 0 32 32"><defs><linearGradient id="plg" x1="0" y1="0" x2="0" y2="1"><stop offset="0" stop-color="#d4f08e"/><stop offset="1" stop-color="#7bb534"/></linearGradient></defs><path d="M5.1 5.000000000000001H8.5V8.100000000000001H11.6V11.5H8.5V14.600000000000001H5.1V11.5H2.0V8.100000000000001H5.1Z" fill="url(#plg)" stroke="#3f6f1c" stroke-width="1" stroke-linejoin="round"/><rect x="13.2" y="3" width="15.7" height="2" fill="#2c3552"/><rect x="19" y="6.8" width="9.899999999999999" height="2" fill="#7d88a3"/><rect x="19" y="9.9" width="9.899999999999999" height="2" fill="#7d88a3"/><rect x="13.2" y="14" width="15.7" height="2" fill="#2c3552"/><rect x="19" y="18" width="9.899999999999999" height="2" fill="#4a5678"/><rect x="19" y="21" width="9.899999999999999" height="2" fill="#4a5678"/><rect x="13.2" y="24.9" width="15.7" height="2" fill="#10131c"/></svg><svg class="ic" style="left:307px;top:274px" width="32" height="32" viewBox="0 0 32 32"><rect x="3.3" y="8.2" width="9.4" height="3.6" rx="1.5" fill="#e0474c" stroke="#9e2a2e" stroke-width="0.8"/><rect x="14" y="3" width="15.8" height="2" fill="#2c3552"/><rect x="20" y="6.8" width="9.8" height="2" fill="#7d88a3"/><rect x="20" y="9.9" width="9.8" height="2" fill="#7d88a3"/><rect x="14" y="14" width="15.8" height="2" fill="#2c3552"/><rect x="20" y="18" width="9.8" height="2" fill="#4a5678"/><rect x="20" y="21" width="9.8" height="2" fill="#4a5678"/><rect x="14" y="24.9" width="15.8" height="2" fill="#10131c"/></svg><svg class="ic" style="left:349px;top:274px" width="32" height="32" viewBox="0 0 32 32"><defs><linearGradient id="plg" x1="0" y1="0" x2="0" y2="1"><stop offset="0" stop-color="#d4f08e"/><stop offset="1" stop-color="#7bb534"/></linearGradient></defs><rect x="1.5" y="1.5" width="23" height="29" fill="#f8fafe" stroke="#6f7484"/><rect x="5" y="5" width="12.5" height="5" fill="#8cb6e4" stroke="#5a83b8" stroke-width="0.7"/><rect x="5" y="13" width="16" height="1" fill="#5a6b8a"/><rect x="5" y="15" width="16" height="1" fill="#5a6b8a"/><rect x="5" y="17" width="16" height="1" fill="#5a6b8a"/><rect x="5" y="19" width="16" height="1" fill="#5a6b8a"/><rect x="5" y="21" width="16" height="1" fill="#5a6b8a"/><rect x="5" y="23" width="16" height="1" fill="#5a6b8a"/><rect x="5" y="25" width="16" height="1" fill="#5a6b8a"/><path d="M22.5 1.2999999999999998H26.700000000000003V5.4H30.8V9.6H26.700000000000003V13.7H22.5V9.6H18.400000000000002V5.4H22.5Z" fill="url(#plg)" stroke="#3f6f1c" stroke-width="1" stroke-linejoin="round"/></svg><svg class="ic" style="left:391px;top:274px" width="32" height="32" viewBox="0 0 32 32"><rect x="4.8" y="1.8" width="22.5" height="28.2" fill="#fbfcff" stroke="#6f7484"/><rect x="7.5" y="5" width="17.5" height="1" fill="#6479ad"/><rect x="7.5" y="7" width="17.5" height="1" fill="#6479ad"/><rect x="7.5" y="9" width="17.5" height="1" fill="#6479ad"/><rect x="7.5" y="21" width="17.5" height="1" fill="#6479ad"/><rect x="7.5" y="23" width="17.5" height="1" fill="#6479ad"/><rect x="7.5" y="25" width="17.5" height="1" fill="#6479ad"/><rect x="7.5" y="11" width="3" height="1" fill="#6479ad"/><rect x="22" y="11" width="3" height="1" fill="#6479ad"/><rect x="7.5" y="13" width="3" height="1" fill="#6479ad"/><rect x="22" y="13" width="3" height="1" fill="#6479ad"/><rect x="7.5" y="15" width="3" height="1" fill="#6479ad"/><rect x="22" y="15" width="3" height="1" fill="#6479ad"/><rect x="7.5" y="17" width="3" height="1" fill="#6479ad"/><rect x="22" y="17" width="3" height="1" fill="#6479ad"/><rect x="7.5" y="19" width="3" height="1" fill="#6479ad"/><rect x="22" y="19" width="3" height="1" fill="#6479ad"/><rect x="11.5" y="11.5" width="9.5" height="8.5" fill="#d9c68a" stroke="#7d8a6a" stroke-width="0.8"/><circle cx="16.2" cy="15.5" r="2" fill="#e6a24a"/></svg><svg class="ic" style="left:433px;top:274px" width="32" height="32" viewBox="0 0 32 32"><path d="M6.8 6.5L25.3 25M25.3 6.5L6.8 25" stroke="#8c2a24" stroke-width="5.6" stroke-linecap="round"/><defs><linearGradient id="xg" x1="0" y1="0" x2="0" y2="1"><stop offset="0" stop-color="#f29a96"/><stop offset="1" stop-color="#d63a32"/></linearGradient></defs><path d="M6.8 6.5L25.3 25M25.3 6.5L6.8 25" stroke="url(#xg)" stroke-width="3.9" stroke-linecap="round"/></svg><svg class="ic" style="left:475px;top:274px" width="32" height="32" viewBox="0 0 32 32"><defs><linearGradient id="bk1" x1="0" y1="0" x2="0" y2="1"><stop offset="0" stop-color="#f7d07a"/><stop offset="1" stop-color="#e59a30"/></linearGradient></defs><defs><linearGradient id="ib1" x1="0" y1="0" x2="0" y2="1"><stop offset="0" stop-color="#7aa6de"/><stop offset="1" stop-color="#2c5fa8"/></linearGradient></defs><rect x="3" y="1.5" width="23.5" height="26" rx="1" fill="url(#bk1)" stroke="#9a5a1e"/><rect x="3" y="1.5" width="23.5" height="2.5" fill="#fff8e6" stroke="#9a5a1e" stroke-width="0.8"/><rect x="3.2" y="4" width="5" height="23.3" fill="#c67a2a"/><circle cx="24" cy="23.8" r="6" fill="url(#ib1)" stroke="#fff" stroke-width="1.2"/><circle cx="24" cy="23.8" r="6.8" fill="none" stroke="#4a6fa8" stroke-width="0.7"/><rect x="23" y="22.5" width="2" height="5" fill="#fff"/><circle cx="24" cy="20.3" r="1.1" fill="#fff"/></svg><svg class="ic" style="left:516px;top:274px" width="32" height="32" viewBox="0 0 32 32"><defs><linearGradient id="tab" x1="0" y1="0" x2="0" y2="1"><stop offset="0" stop-color="#f0a14e"/><stop offset="1" stop-color="#d77a20"/></linearGradient></defs><defs><linearGradient id="taf" x1="0" y1="0" x2="0" y2="1"><stop offset="0" stop-color="#fbe0a8"/><stop offset="1" stop-color="#e3a45a"/></linearGradient></defs><path d="M11.5 27Q11.5 17 20.75 17Q30 17 30 27Z" fill="url(#tab)" stroke="#5f7a23" stroke-width="0.8"/><ellipse cx="20" cy="11" rx="5.2" ry="6.5" fill="url(#taf)" stroke="#8a4f22" stroke-width="0.8"/><path d="M14.475000000000001 10.35Q13.5 3.5250000000000004 20 4.175Q26.5 3.5250000000000004 25.525 10.35Q23.25 7.1 20 7.425Q16.75 7.1 14.475000000000001 10.35Z" fill="#a0582a"/><defs><linearGradient id="ar2" x1="0" y1="0" x2="0" y2="1"><stop offset="0" stop-color="#b8e27a"/><stop offset="1" stop-color="#5f9e2b"/></linearGradient></defs><path d="M1.8 16.5H8.5V13.5L17.5 19.6L8.5 25.7V22.7H1.8Z" fill="url(#ar2)" stroke="#3f7a1a" stroke-width="0.9" stroke-linejoin="round"/></svg><svg class="ic" style="left:558px;top:274px" width="32" height="32" viewBox="0 0 32 32"><defs><linearGradient id="nt1" x1="0" y1="0" x2="0" y2="1"><stop offset="0" stop-color="#fde2a0"/><stop offset="1" stop-color="#f3bf62"/></linearGradient></defs><rect x="3.5" y="2.5" width="27" height="27" rx="1.5" fill="url(#nt1)" stroke="#c38a3a"/><rect x="4" y="8" width="26" height="0.8" fill="#e9a84a" opacity="0.6"/><rect x="4" y="11" width="26" height="0.8" fill="#e9a84a" opacity="0.6"/><rect x="4" y="14" width="26" height="0.8" fill="#e9a84a" opacity="0.6"/><rect x="4" y="17" width="26" height="0.8" fill="#e9a84a" opacity="0.6"/><rect x="4" y="20" width="26" height="0.8" fill="#e9a84a" opacity="0.6"/><rect x="4" y="23" width="26" height="0.8" fill="#e9a84a" opacity="0.6"/><rect x="4" y="26" width="26" height="0.8" fill="#e9a84a" opacity="0.6"/><rect x="24" y="3" width="0.8" height="26" fill="#e9a84a" opacity="0.6"/><defs><linearGradient id="pn1" x1="0" y1="0" x2="0" y2="1"><stop offset="0" stop-color="#a6cbf2"/><stop offset="1" stop-color="#2f62b0"/></linearGradient></defs><circle cx="18.6" cy="5.3" r="3.6" fill="url(#pn1)" stroke="#2a4f88" stroke-width="0.7"/></svg><svg class="ic" style="left:601px;top:274px" width="32" height="32" viewBox="0 0 32 32"><defs><linearGradient id="ab1" x1="0" y1="0" x2="0" y2="1"><stop offset="0" stop-color="#d2e8fb"/><stop offset="1" stop-color="#8dc0ef"/></linearGradient></defs><rect x="2.5" y="4.5" width="27" height="12.5" fill="url(#ab1)" stroke="#6495c9" stroke-width="1"/><text x="16" y="15" text-anchor="middle" font-family="Liberation Sans" font-weight="bold" font-size="11" fill="#1f4a7a">ABC</text><path d="M3 19V28M29 19V28M3.5 23.5H28.5" stroke="#2a2f45" stroke-width="1.4"/><path d="M3.5 23.5L7.5 21V26Z M28.5 23.5L24.5 21V26Z" fill="#2a2f45"/></svg><svg class="ic" style="left:641px;top:274px" width="32" height="32" viewBox="0 0 32 32"><defs><linearGradient id="rf1" x1="0" y1="0" x2="0" y2="1"><stop offset="0" stop-color="#ffffff"/><stop offset="1" stop-color="#e3ecf7"/></linearGradient></defs><defs><linearGradient id="rf2" x1="0" y1="0" x2="0" y2="1"><stop offset="0" stop-color="#d7f09a"/><stop offset="1" stop-color="#84ba3a"/></linearGradient></defs><rect x="2.8" y="0.8" width="20.4" height="19.4" rx="1" fill="url(#rf1)" stroke="#6f7484"/><rect x="5.5" y="3.5" width="4" height="4" fill="#8db0d8"/><rect x="11" y="3.5" width="10" height="4" fill="#8db0d8"/><rect x="5.5" y="9" width="4" height="9" fill="#8db0d8"/><path d="M14.5 18Q15.5 11.5 22 11.5Q25.5 11.5 27.5 13.5L29.5 11.5V18.5H22.5L24.5 16.5Q23.5 15.5 22 15.5Q18.5 15.5 18 18Z" fill="url(#rf2)" stroke="#4f7f22" stroke-width="0.8" stroke-linejoin="round"/><path d="M29 20Q28 26.5 21.5 26.5Q18 26.5 16 24.5L14 26.5V19.5H21L19 21.5Q20 22.5 21.5 22.5Q25 22.5 25.5 20Z" fill="url(#rf2)" stroke="#4f7f22" stroke-width="0.8" stroke-linejoin="round"/></svg><svg class="ic" style="left:684px;top:274px" width="32" height="32" viewBox="0 0 32 32"><defs><linearGradient id="ug1" x1="0" y1="0" x2="0" y2="1"><stop offset="0" stop-color="#d2ee8a"/><stop offset="1" stop-color="#5a9a22"/></linearGradient></defs><path d="M17.7 20A6.7 8.6 0 1 0 17 10.2Q11.5 11.5 9.4 17.5" fill="none" stroke="#4d7f1f" stroke-width="5.4"/><path d="M17.7 20A6.7 8.6 0 1 0 17 10.2Q11.5 11.5 9.4 17.5" fill="none" stroke="url(#ug1)" stroke-width="3.6"/><path d="M2.2 16.6H16.8L9.4 28.5Z" fill="#7cb83a" stroke="#4d7f1f" stroke-width="0.9" stroke-linejoin="round"/></svg><div class="a" style="left:727px;top:268px;width:516px;height:45px;border-radius:4px;background:linear-gradient(#ffffff,#f1f2f5);box-shadow:0 1px 0 #c8c9ce,1px 0 0 #d7d8dd,-1px 0 0 #e1e2e6"></div><div class="a" style="left:731px;top:282px;width:3px;height:15px;background:repeating-linear-gradient(90deg,#c8c9ce 0 1px,#fff 1px 2px)"></div><div class="t" style="left:747px;top:283px;font-size:11.8px;line-height:14px">Show Completed Tasks</div><div class="a" style="left:873px;top:284px;width:12px;height:12px;border:1px solid #a3a4aa;background:linear-gradient(#f1f1f3,#fff)"></div><div class="t" style="left:898px;top:283px;font-size:11.8px;line-height:14px">Assignees</div><div class="a" style="left:958px;top:279px;width:213px;height:21px;border:1px solid #c2c3c9;background:#fff"></div><svg class="ic" style="left:1159px;top:287px" width="8" height="5"><path d="M0 0H7L3.5 4Z" fill="#222"/></svg><div class="t" style="left:1182px;top:283px;font-size:11.8px;line-height:14px">All Dates</div><svg class="ic" style="left:1230px;top:288px" width="7" height="4"><path d="M0 0H6L3 3Z" fill="#222"/></svg><div class="t b" style="left:2397px;top:275px;font-size:14.8px;line-height:17px">Total Project Cost: $0</div><div class="a" style="left:74px;top:314px;width:2483px;height:951px;border:1px solid #9c9da4;background:#fff"></div><div class="a" style="left:75px;top:315px;width:2481px;height:20px;background:linear-gradient(#f7f7f9,#eeeff2);border-bottom:1px solid #cdced3"></div><div class="a" style="left:124px;top:315px;width:1px;height:19px;background:#d3d4d9"></div><div class="a" style="left:673px;top:315px;width:1px;height:19px;background:#d3d4d9"></div><div class="a" style="left:809px;top:315px;width:1px;height:19px;background:#d3d4d9"></div><div class="a" style="left:986px;top:315px;width:1px;height:19px;background:#d3d4d9"></div><div class="a" style="left:1069px;top:315px;width:1px;height:19px;background:#d3d4d9"></div><div class="a" style="left:1152px;top:315px;width:1px;height:19px;background:#d3d4d9"></div><div class="a" style="left:1198px;top:315px;width:1px;height:19px;background:#d3d4d9"></div><div class="a" style="left:1258px;top:315px;width:1px;height:19px;background:#d3d4d9"></div><div class="a" style="left:1338px;top:315px;width:1px;height:19px;background:#d3d4d9"></div><div class="a" style="left:1393px;top:315px;width:1px;height:19px;background:#d3d4d9"></div><div class="a" style="left:1459px;top:315px;width:1px;height:19px;background:#d3d4d9"></div><div class="a" style="left:1460px;top:315px;width:1px;height:19px;background:#fafafb"></div><div class="t" style="left:129px;top:318px">Task Name</div><div class="t" style="left:677px;top:318px">Assignments</div><div class="t" style="left:813px;top:318px">Notes</div><div class="t r" style="left:966px;top:318px;width:100px">Start Date</div><div class="t r" style="left:1049px;top:318px;width:100px">End Date</div><div class="t r" style="left:1095px;top:318px;width:100px">Cost</div><div class="t r" style="left:1155px;top:318px;width:100px">% Done</div><div class="t" style="left:1262px;top:318px">Status</div><div class="t" style="left:1342px;top:318px">Priority</div><div class="t c" style="left:1376px;top:318px;width:100px">Complete</div><div class="a" style="left:75px;top:335px;width:49px;height:722px;background:#f3f4f7"></div><div class="a" style="left:124px;top:335px;width:1px;height:722px;background:#cdced3"></div><div class="a" style="left:75px;top:353px;width:49px;height:1px;background:#b4b5bb"></div><div class="a" style="left:143px;top:334px;width:530px;height:20px;border-left:1px solid #dcdde1;border-bottom:1px solid #dcdde1;border-top:1px solid #dcdde1"></div><div class="a" style="left:673px;top:353px;width:787px;height:1px;background:#dcdde1"></div><div class="a" style="left:144px;top:335px;width:1315px;height:18px;background:#4168db"></div><svg class="ic" style="left:130px;top:344px" width="8" height="5"><path d="M0.5 0H7L3.75 3.8Z" fill="#7a7b80"/></svg><div class="t b" style="left:148px;top:338px;font-size:12px;color:#fff">Plan the newsletter</div><div class="t b" style="left:677px;top:338px;font-size:12px;color:#fff">Newsletter Manager,...</div><div class="t r b" style="left:966px;top:338px;width:100px;font-size:12px;letter-spacing:0.75px;color:#fff">12/30/2020</div><div class="t r b" style="left:1049px;top:338px;width:100px;font-size:12px;letter-spacing:0.75px;color:#fff">02/01/2021</div><div class="t r b" style="left:1095px;top:338px;width:100px;font-size:12px;color:#fff">$0.00</div><div class="t r b" style="left:1155px;top:338px;width:100px;font-size:12px;color:#fff">0</div><div class="t b" style="left:1262px;top:338px;font-size:12px;color:#fff">Not Started</div><div class="t b" style="left:1342px;top:338px;font-size:12px;color:#fff">Low</div><div class="a" style="left:1420px;top:338px;width:13px;height:13px;border:1px solid #c9ccd6;background:linear-gradient(#e6e8ee,#ffffff)"></div><div class="a" style="left:75px;top:372px;width:49px;height:1px;background:#b4b5bb"></div><div class="a" style="left:161px;top:353px;width:512px;height:20px;border-left:1px solid #dcdde1;border-bottom:1px solid #dcdde1;border-top:1px solid #dcdde1"></div><div class="a" style="left:673px;top:372px;width:787px;height:1px;background:#dcdde1"></div><div class="t" style="left:165px;top:357px;color:#1e1e30">Define the audience and purpose</div><div class="t" style="left:677px;top:357px;color:#1e1e30">Newsletter Manager</div><div class="t" style="left:813px;top:357px;color:#1e1e30">Check with department heads</div><div class="t r" style="left:966px;top:357px;width:100px;letter-spacing:0.15px;color:#1e1e30">01/17/2021</div><div class="t r" style="left:1049px;top:357px;width:100px;letter-spacing:0.15px;color:#1e1e30">01/17/2021</div><div class="t r" style="left:1095px;top:357px;width:100px;color:#1e1e30">$0.00</div><div class="t r" style="left:1155px;top:357px;width:100px;color:#1e1e30">0</div><div class="t" style="left:1262px;top:357px;color:#1e1e30">Not Started</div><div class="t" style="left:1342px;top:357px;color:#1e1e30">Low</div><div class="a" style="left:1420px;top:357px;width:13px;height:13px;border:1px solid #a5a6ac;background:linear-gradient(#f0f0f2,#ffffff)"></div><div class="a" style="left:75px;top:391px;width:49px;height:1px;background:#b4b5bb"></div><div class="a" style="left:161px;top:372px;width:512px;height:20px;border-left:1px solid #dcdde1;border-bottom:1px solid #dcdde1;border-top:1px solid #dcdde1"></div><div class="a" style="left:673px;top:391px;width:787px;height:1px;background:#dcdde1"></div><div class="t" style="left:165px;top:376px;color:#1e1e30">Create budget</div><div class="t" style="left:677px;top:376px;color:#1e1e30">Newsletter Manager</div><div class="t" style="left:813px;top:376px;color:#1e1e30">Set up meeting with CFO</div><div class="t r" style="left:966px;top:376px;width:100px;letter-spacing:0.15px;color:#1e1e30">01/18/2021</div><div class="t r" style="left:1049px;top:376px;width:100px;letter-spacing:0.15px;color:#1e1e30">01/18/2021</div><div class="t r" style="left:1095px;top:376px;width:100px;color:#1e1e30">$0.00</div><div class="t r" style="left:1155px;top:376px;width:100px;color:#1e1e30">0</div><div class="t" style="left:1262px;top:376px;color:#1e1e30">Not Started</div><div class="t" style="left:1342px;top:376px;color:#1e1e30">Low</div><div class="a" style="left:1420px;top:376px;width:13px;height:13px;border:1px solid #a5a6ac;background:linear-gradient(#f0f0f2,#ffffff)"></div><div class="a" style="left:75px;top:410px;width:49px;height:1px;background:#b4b5bb"></div><div class="a" style="left:161px;top:391px;width:512px;height:20px;border-left:1px solid #dcdde1;border-bottom:1px solid #dcdde1;border-top:1px solid #dcdde1"></div><div class="a" style="left:673px;top:410px;width:787px;height:1px;background:#dcdde1"></div><div class="t" style="left:165px;top:395px;color:#1e1e30">Allow fudge days in schedule for problems</div><div class="t" style="left:677px;top:395px;color:#1e1e30">Newsletter Manager</div><div class="t r" style="left:966px;top:395px;width:100px;letter-spacing:0.15px;color:#1e1e30">01/26/2021</div><div class="t r" style="left:1049px;top:395px;width:100px;letter-spacing:0.15px;color:#1e1e30">02/01/2021</div><div class="t r" style="left:1095px;top:395px;width:100px;color:#1e1e30">$0.00</div><div class="t r" style="left:1155px;top:395px;width:100px;color:#1e1e30">0</div><div class="t" style="left:1262px;top:395px;color:#1e1e30">Not Started</div><div class="t" style="left:1342px;top:395px;color:#1e1e30">Low</div><div class="a" style="left:1420px;top:395px;width:13px;height:13px;border:1px solid #a5a6ac;background:linear-gradient(#f0f0f2,#ffffff)"></div><div class="a" style="left:75px;top:429px;width:49px;height:1px;background:#b4b5bb"></div><div class="a" style="left:161px;top:410px;width:512px;height:20px;border-left:1px solid #dcdde1;border-bottom:1px solid #dcdde1;border-top:1px solid #dcdde1"></div><div class="a" style="left:673px;top:429px;width:787px;height:1px;background:#dcdde1"></div><svg class="ic" style="left:148px;top:420px" width="8" height="5"><path d="M0.5 0H7L3.75 3.8Z" fill="#7a7b80"/></svg><div class="t b" style="left:165px;top:414px;font-size:12px;color:#1e1e30">Name the newsletter</div><div class="t b" style="left:677px;top:414px;font-size:12px;color:#1e1e30">Employees</div><div class="t r b" style="left:966px;top:414px;width:100px;font-size:12px;letter-spacing:0.75px;color:#1e1e30">01/04/2021</div><div class="t r b" style="left:1049px;top:414px;width:100px;font-size:12px;letter-spacing:0.75px;color:#1e1e30">01/12/2021</div><div class="t r b" style="left:1095px;top:414px;width:100px;font-size:12px;color:#1e1e30">$0.00</div><div class="t r b" style="left:1155px;top:414px;width:100px;font-size:12px;color:#1e1e30">0</div><div class="t b" style="left:1262px;top:414px;font-size:12px;color:#1e1e30">Not Started</div><div class="t b" style="left:1342px;top:414px;font-size:12px;color:#1e1e30">Low</div><div class="a" style="left:1420px;top:414px;width:13px;height:13px;border:1px solid #a5a6ac;background:linear-gradient(#f0f0f2,#ffffff)"></div><div class="a" style="left:75px;top:448px;width:49px;height:1px;background:#b4b5bb"></div><div class="a" style="left:179px;top:429px;width:494px;height:20px;border-left:1px solid #dcdde1;border-bottom:1px solid #dcdde1;border-top:1px solid #dcdde1"></div><div class="a" style="left:673px;top:448px;width:787px;height:1px;background:#dcdde1"></div><div class="t" style="left:183px;top:433px;color:#1e1e30">Hold contest or employee suggestion box</div><div class="t r" style="left:966px;top:433px;width:100px;letter-spacing:0.15px;color:#1e1e30">01/04/2021</div><div class="t r" style="left:1049px;top:433px;width:100px;letter-spacing:0.15px;color:#1e1e30">01/12/2021</div><div class="t r" style="left:1095px;top:433px;width:100px;color:#1e1e30">$0.00</div><div class="t r" style="left:1155px;top:433px;width:100px;color:#1e1e30">0</div><div class="t" style="left:1262px;top:433px;color:#1e1e30">Not Started</div><div class="t" style="left:1342px;top:433px;color:#1e1e30">Low</div><div class="a" style="left:1420px;top:433px;width:13px;height:13px;border:1px solid #a5a6ac;background:linear-gradient(#f0f0f2,#ffffff)"></div><div class="a" style="left:75px;top:467px;width:49px;height:1px;background:#b4b5bb"></div><div class="a" style="left:161px;top:448px;width:512px;height:20px;border-left:1px solid #dcdde1;border-bottom:1px solid #dcdde1;border-top:1px solid #dcdde1"></div><div class="a" style="left:673px;top:467px;width:787px;height:1px;background:#dcdde1"></div><div class="t" style="left:165px;top:452px;color:#1e1e30">Plan monthly newsletter theme</div><div class="t" style="left:677px;top:452px;color:#1e1e30">Newsletter Manager</div><div class="t r" style="left:966px;top:452px;width:100px;letter-spacing:0.15px;color:#1e1e30">01/13/2021</div><div class="t r" style="left:1049px;top:452px;width:100px;letter-spacing:0.15px;color:#1e1e30">01/13/2021</div><div class="t r" style="left:1095px;top:452px;width:100px;color:#1e1e30">$0.00</div><div class="t r" style="left:1155px;top:452px;width:100px;color:#1e1e30">0</div><div class="t" style="left:1262px;top:452px;color:#1e1e30">Not Started</div><div class="t" style="left:1342px;top:452px;color:#1e1e30">Low</div><div class="a" style="left:1420px;top:452px;width:13px;height:13px;border:1px solid #a5a6ac;background:linear-gradient(#f0f0f2,#ffffff)"></div><div class="a" style="left:75px;top:486px;width:49px;height:1px;background:#b4b5bb"></div><div class="a" style="left:161px;top:467px;width:512px;height:20px;border-left:1px solid #dcdde1;border-bottom:1px solid #dcdde1;border-top:1px solid #dcdde1"></div><div class="a" style="left:673px;top:486px;width:787px;height:1px;background:#dcdde1"></div><div class="t" style="left:165px;top:471px;color:#1e1e30">Contact graphic designer</div><div class="t" style="left:677px;top:471px;color:#1e1e30">Newsletter Staff</div><div class="t r" style="left:966px;top:471px;width:100px;letter-spacing:0.15px;color:#1e1e30">01/03/2021</div><div class="t r" style="left:1049px;top:471px;width:100px;letter-spacing:0.15px;color:#1e1e30">01/03/2021</div><div class="t r" style="left:1095px;top:471px;width:100px;color:#1e1e30">$0.00</div><div class="t r" style="left:1155px;top:471px;width:100px;color:#1e1e30">0</div><div class="t" style="left:1262px;top:471px;color:#1e1e30">Not Started</div><div class="t" style="left:1342px;top:471px;color:#1e1e30">Low</div><div class="a" style="left:1420px;top:471px;width:13px;height:13px;border:1px solid #a5a6ac;background:linear-gradient(#f0f0f2,#ffffff)"></div><div class="a" style="left:75px;top:505px;width:49px;height:1px;background:#b4b5bb"></div><div class="a" style="left:161px;top:486px;width:512px;height:20px;border-left:1px solid #dcdde1;border-bottom:1px solid #dcdde1;border-top:1px solid #dcdde1"></div><div class="a" style="left:673px;top:505px;width:787px;height:1px;background:#dcdde1"></div><div class="t" style="left:165px;top:490px;color:#1e1e30">Create and distribute work schedule</div><div class="t" style="left:677px;top:490px;color:#1e1e30">Newsletter Staff</div><div class="t r" style="left:966px;top:490px;width:100px;letter-spacing:0.15px;color:#1e1e30">01/10/2021</div><div class="t r" style="left:1049px;top:490px;width:100px;letter-spacing:0.15px;color:#1e1e30">01/10/2021</div><div class="t r" style="left:1095px;top:490px;width:100px;color:#1e1e30">$0.00</div><div class="t r" style="left:1155px;top:490px;width:100px;color:#1e1e30">0</div><div class="t" style="left:1262px;top:490px;color:#1e1e30">Not Started</div><div class="t" style="left:1342px;top:490px;color:#1e1e30">Low</div><div class="a" style="left:1420px;top:490px;width:13px;height:13px;border:1px solid #a5a6ac;background:linear-gradient(#f0f0f2,#ffffff)"></div><div class="a" style="left:75px;top:524px;width:49px;height:1px;background:#b4b5bb"></div><div class="a" style="left:161px;top:505px;width:512px;height:20px;border-left:1px solid #dcdde1;border-bottom:1px solid #dcdde1;border-top:1px solid #dcdde1"></div><div class="a" style="left:673px;top:524px;width:787px;height:1px;background:#dcdde1"></div><div class="t" style="left:165px;top:509px;color:#1e1e30">Develop story ideas</div><div class="t" style="left:677px;top:509px;color:#1e1e30">Newsletter Staff, Newsl...</div><div class="t r" style="left:966px;top:509px;width:100px;letter-spacing:0.15px;color:#1e1e30">01/11/2021</div><div class="t r" style="left:1049px;top:509px;width:100px;letter-spacing:0.15px;color:#1e1e30">01/12/2021</div><div class="t r" style="left:1095px;top:509px;width:100px;color:#1e1e30">$0.00</div><div class="t r" style="left:1155px;top:509px;width:100px;color:#1e1e30">0</div><div class="t" style="left:1262px;top:509px;color:#1e1e30">Not Started</div><div class="t" style="left:1342px;top:509px;color:#1e1e30">Low</div><div class="a" style="left:1420px;top:509px;width:13px;height:13px;border:1px solid #a5a6ac;background:linear-gradient(#f0f0f2,#ffffff)"></div><div class="a" style="left:75px;top:543px;width:49px;height:1px;background:#b4b5bb"></div><div class="a" style="left:161px;top:524px;width:512px;height:20px;border-left:1px solid #dcdde1;border-bottom:1px solid #dcdde1;border-top:1px solid #dcdde1"></div><div class="a" style="left:673px;top:543px;width:787px;height:1px;background:#dcdde1"></div><div class="t" style="left:165px;top:528px;color:#1e1e30">Develop photo ideas</div><div class="t" style="left:677px;top:528px;color:#1e1e30">Newsletter Staff</div><div class="t r" style="left:966px;top:528px;width:100px;letter-spacing:0.15px;color:#1e1e30">01/12/2021</div><div class="t r" style="left:1049px;top:528px;width:100px;letter-spacing:0.15px;color:#1e1e30">01/12/2021</div><div class="t r" style="left:1095px;top:528px;width:100px;color:#1e1e30">$0.00</div><div class="t r" style="left:1155px;top:528px;width:100px;color:#1e1e30">0</div><div class="t" style="left:1262px;top:528px;color:#1e1e30">Not Started</div><div class="t" style="left:1342px;top:528px;color:#1e1e30">Low</div><div class="a" style="left:1420px;top:528px;width:13px;height:13px;border:1px solid #a5a6ac;background:linear-gradient(#f0f0f2,#ffffff)"></div><div class="a" style="left:75px;top:562px;width:49px;height:1px;background:#b4b5bb"></div><div class="a" style="left:161px;top:543px;width:512px;height:20px;border-left:1px solid #dcdde1;border-bottom:1px solid #dcdde1;border-top:1px solid #dcdde1"></div><div class="a" style="left:673px;top:562px;width:787px;height:1px;background:#dcdde1"></div><div class="t" style="left:165px;top:547px;color:#1e1e30">Create a stylebook for contributors</div><div class="t" style="left:677px;top:547px;color:#1e1e30">Newsletter Manager</div><div class="t r" style="left:966px;top:547px;width:100px;letter-spacing:0.15px;color:#1e1e30">01/13/2021</div><div class="t r" style="left:1049px;top:547px;width:100px;letter-spacing:0.15px;color:#1e1e30">01/13/2021</div><div class="t r" style="left:1095px;top:547px;width:100px;color:#1e1e30">$0.00</div><div class="t r" style="left:1155px;top:547px;width:100px;color:#1e1e30">0</div><div class="t" style="left:1262px;top:547px;color:#1e1e30">Not Started</div><div class="t" style="left:1342px;top:547px;color:#1e1e30">Low</div><div class="a" style="left:1420px;top:547px;width:13px;height:13px;border:1px solid #a5a6ac;background:linear-gradient(#f0f0f2,#ffffff)"></div><div class="a" style="left:75px;top:581px;width:49px;height:1px;background:#b4b5bb"></div><div class="a" style="left:161px;top:562px;width:512px;height:20px;border-left:1px solid #dcdde1;border-bottom:1px solid #dcdde1;border-top:1px solid #dcdde1"></div><div class="a" style="left:673px;top:581px;width:787px;height:1px;background:#dcdde1"></div><div class="t" style="left:165px;top:566px;color:#1e1e30">Assign articles</div><div class="t" style="left:677px;top:566px;color:#1e1e30">Newsletter Manager</div><div class="t r" style="left:966px;top:566px;width:100px;letter-spacing:0.15px;color:#1e1e30">01/14/2021</div><div class="t r" style="left:1049px;top:566px;width:100px;letter-spacing:0.15px;color:#1e1e30">01/14/2021</div><div class="t r" style="left:1095px;top:566px;width:100px;color:#1e1e30">$0.00</div><div class="t r" style="left:1155px;top:566px;width:100px;color:#1e1e30">0</div><div class="t" style="left:1262px;top:566px;color:#1e1e30">Not Started</div><div class="t" style="left:1342px;top:566px;color:#1e1e30">Low</div><div class="a" style="left:1420px;top:566px;width:13px;height:13px;border:1px solid #a5a6ac;background:linear-gradient(#f0f0f2,#ffffff)"></div><div class="a" style="left:75px;top:600px;width:49px;height:1px;background:#b4b5bb"></div><div class="a" style="left:161px;top:581px;width:512px;height:20px;border-left:1px solid #dcdde1;border-bottom:1px solid #dcdde1;border-top:1px solid #dcdde1"></div><div class="a" style="left:673px;top:600px;width:787px;height:1px;background:#dcdde1"></div><div class="t" style="left:165px;top:585px;color:#1e1e30">Publish article on a product and the employees who made it</div><div class="t" style="left:677px;top:585px;color:#1e1e30">Newsletter Staff</div><div class="t r" style="left:966px;top:585px;width:100px;letter-spacing:0.15px;color:#1e1e30">01/10/2021</div><div class="t r" style="left:1049px;top:585px;width:100px;letter-spacing:0.15px;color:#1e1e30">01/10/2021</div><div class="t r" style="left:1095px;top:585px;width:100px;color:#1e1e30">$0.00</div><div class="t r" style="left:1155px;top:585px;width:100px;color:#1e1e30">0</div><div class="t" style="left:1262px;top:585px;color:#1e1e30">Not Started</div><div class="t" style="left:1342px;top:585px;color:#1e1e30">Low</div><div class="a" style="left:1420px;top:585px;width:13px;height:13px;border:1px solid #a5a6ac;background:linear-gradient(#f0f0f2,#ffffff)"></div><div class="a" style="left:75px;top:619px;width:49px;height:1px;background:#b4b5bb"></div><div class="a" style="left:161px;top:600px;width:512px;height:20px;border-left:1px solid #dcdde1;border-bottom:1px solid #dcdde1;border-top:1px solid #dcdde1"></div><div class="a" style="left:673px;top:619px;width:787px;height:1px;background:#dcdde1"></div><div class="t" style="left:165px;top:604px;color:#1e1e30">Adequate funding</div><div class="t" style="left:677px;top:604px;color:#1e1e30">Newsletter Manager</div><div class="t r" style="left:966px;top:604px;width:100px;letter-spacing:0.15px;color:#1e1e30">01/10/2021</div><div class="t r" style="left:1049px;top:604px;width:100px;letter-spacing:0.15px;color:#1e1e30">01/10/2021</div><div class="t r" style="left:1095px;top:604px;width:100px;color:#1e1e30">$0.00</div><div class="t r" style="left:1155px;top:604px;width:100px;color:#1e1e30">0</div><div class="t" style="left:1262px;top:604px;color:#1e1e30">Not Started</div><div class="t" style="left:1342px;top:604px;color:#1e1e30">Low</div><div class="a" style="left:1420px;top:604px;width:13px;height:13px;border:1px solid #a5a6ac;background:linear-gradient(#f0f0f2,#ffffff)"></div><div class="a" style="left:75px;top:638px;width:49px;height:1px;background:#b4b5bb"></div><div class="a" style="left:161px;top:619px;width:512px;height:20px;border-left:1px solid #dcdde1;border-bottom:1px solid #dcdde1;border-top:1px solid #dcdde1"></div><div class="a" style="left:673px;top:638px;width:787px;height:1px;background:#dcdde1"></div><div class="t" style="left:165px;top:623px;color:#1e1e30">Staffing</div><div class="t" style="left:677px;top:623px;color:#1e1e30">Newsletter Manager</div><div class="t r" style="left:966px;top:623px;width:100px;letter-spacing:0.15px;color:#1e1e30">12/30/2020</div><div class="t r" style="left:1049px;top:623px;width:100px;letter-spacing:0.15px;color:#1e1e30">12/30/2020</div><div class="t r" style="left:1095px;top:623px;width:100px;color:#1e1e30">$0.00</div><div class="t r" style="left:1155px;top:623px;width:100px;color:#1e1e30">0</div><div class="t" style="left:1262px;top:623px;color:#1e1e30">Not Started</div><div class="t" style="left:1342px;top:623px;color:#1e1e30">Low</div><div class="a" style="left:1420px;top:623px;width:13px;height:13px;border:1px solid #a5a6ac;background:linear-gradient(#f0f0f2,#ffffff)"></div><div class="a" style="left:75px;top:657px;width:49px;height:1px;background:#b4b5bb"></div><div class="a" style="left:161px;top:638px;width:512px;height:20px;border-left:1px solid #dcdde1;border-bottom:1px solid #dcdde1;border-top:1px solid #dcdde1"></div><div class="a" style="left:673px;top:657px;width:787px;height:1px;background:#dcdde1"></div><div class="t" style="left:165px;top:642px;color:#1e1e30">Get total budget approved early</div><div class="t" style="left:677px;top:642px;color:#1e1e30">Newsletter Manager</div><div class="t r" style="left:966px;top:642px;width:100px;letter-spacing:0.15px;color:#1e1e30">01/10/2021</div><div class="t r" style="left:1049px;top:642px;width:100px;letter-spacing:0.15px;color:#1e1e30">01/10/2021</div><div class="t r" style="left:1095px;top:642px;width:100px;color:#1e1e30">$0.00</div><div class="t r" style="left:1155px;top:642px;width:100px;color:#1e1e30">0</div><div class="t" style="left:1262px;top:642px;color:#1e1e30">Not Started</div><div class="t" style="left:1342px;top:642px;color:#1e1e30">Low</div><div class="a" style="left:1420px;top:642px;width:13px;height:13px;border:1px solid #a5a6ac;background:linear-gradient(#f0f0f2,#ffffff)"></div><div class="a" style="left:75px;top:676px;width:49px;height:1px;background:#b4b5bb"></div><div class="a" style="left:161px;top:657px;width:512px;height:20px;border-left:1px solid #dcdde1;border-bottom:1px solid #dcdde1;border-top:1px solid #dcdde1"></div><div class="a" style="left:673px;top:676px;width:787px;height:1px;background:#dcdde1"></div><div class="t" style="left:165px;top:661px;color:#1e1e30">Meeting to discuss value of newsletter to all stakeholders</div><div class="t" style="left:677px;top:661px;color:#1e1e30">Newsletter Manager</div><div class="t r" style="left:966px;top:661px;width:100px;letter-spacing:0.15px;color:#1e1e30">01/10/2021</div><div class="t r" style="left:1049px;top:661px;width:100px;letter-spacing:0.15px;color:#1e1e30">01/10/2021</div><div class="t r" style="left:1095px;top:661px;width:100px;color:#1e1e30">$0.00</div><div class="t r" style="left:1155px;top:661px;width:100px;color:#1e1e30">0</div><div class="t" style="left:1262px;top:661px;color:#1e1e30">Not Started</div><div class="t" style="left:1342px;top:661px;color:#1e1e30">Low</div><div class="a" style="left:1420px;top:661px;width:13px;height:13px;border:1px solid #a5a6ac;background:linear-gradient(#f0f0f2,#ffffff)"></div><div class="a" style="left:75px;top:695px;width:49px;height:1px;background:#b4b5bb"></div><div class="a" style="left:161px;top:676px;width:512px;height:20px;border-left:1px solid #dcdde1;border-bottom:1px solid #dcdde1;border-top:1px solid #dcdde1"></div><div class="a" style="left:673px;top:695px;width:787px;height:1px;background:#dcdde1"></div><div class="t" style="left:165px;top:680px;color:#1e1e30">Select team that works well together</div><div class="t" style="left:677px;top:680px;color:#1e1e30">Newsletter Manager</div><div class="t r" style="left:966px;top:680px;width:100px;letter-spacing:0.15px;color:#1e1e30">01/10/2021</div><div class="t r" style="left:1049px;top:680px;width:100px;letter-spacing:0.15px;color:#1e1e30">01/10/2021</div><div class="t r" style="left:1095px;top:680px;width:100px;color:#1e1e30">$0.00</div><div class="t r" style="left:1155px;top:680px;width:100px;color:#1e1e30">0</div><div class="t" style="left:1262px;top:680px;color:#1e1e30">Not Started</div><div class="t" style="left:1342px;top:680px;color:#1e1e30">Low</div><div class="a" style="left:1420px;top:680px;width:13px;height:13px;border:1px solid #a5a6ac;background:linear-gradient(#f0f0f2,#ffffff)"></div><div class="a" style="left:75px;top:714px;width:49px;height:1px;background:#b4b5bb"></div><div class="a" style="left:143px;top:695px;width:530px;height:20px;border-left:1px solid #dcdde1;border-bottom:1px solid #dcdde1;border-top:1px solid #dcdde1"></div><div class="a" style="left:673px;top:714px;width:787px;height:1px;background:#dcdde1"></div><svg class="ic" style="left:130px;top:705px" width="8" height="5"><path d="M0.5 0H7L3.75 3.8Z" fill="#7a7b80"/></svg><div class="t b" style="left:148px;top:699px;font-size:12px;color:#1e1e30">Design pages and write articles</div><div class="t r b" style="left:966px;top:699px;width:100px;font-size:12px;letter-spacing:0.75px;color:#1e1e30">01/18/2021</div><div class="t r b" style="left:1049px;top:699px;width:100px;font-size:12px;letter-spacing:0.75px;color:#1e1e30">03/01/2021</div><div class="t r b" style="left:1095px;top:699px;width:100px;font-size:12px;color:#1e1e30">$0.00</div><div class="t r b" style="left:1155px;top:699px;width:100px;font-size:12px;color:#1e1e30">0</div><div class="t b" style="left:1262px;top:699px;font-size:12px;color:#1e1e30">Not Started</div><div class="t b" style="left:1342px;top:699px;font-size:12px;color:#1e1e30">Low</div><div class="a" style="left:1420px;top:699px;width:13px;height:13px;border:1px solid #a5a6ac;background:linear-gradient(#f0f0f2,#ffffff)"></div><div class="a" style="left:75px;top:733px;width:49px;height:1px;background:#b4b5bb"></div><div class="a" style="left:161px;top:714px;width:512px;height:20px;border-left:1px solid #dcdde1;border-bottom:1px solid #dcdde1;border-top:1px solid #dcdde1"></div><div class="a" style="left:673px;top:733px;width:787px;height:1px;background:#dcdde1"></div><div class="t" style="left:165px;top:718px;color:#1e1e30">Create page layouts</div><div class="t" style="left:677px;top:718px;color:#1e1e30">Newsletter Staff</div><div class="t r" style="left:966px;top:718px;width:100px;letter-spacing:0.15px;color:#1e1e30">01/31/2021</div><div class="t r" style="left:1049px;top:718px;width:100px;letter-spacing:0.15px;color:#1e1e30">01/31/2021</div><div class="t r" style="left:1095px;top:718px;width:100px;color:#1e1e30">$0.00</div><div class="t r" style="left:1155px;top:718px;width:100px;color:#1e1e30">0</div><div class="t" style="left:1262px;top:718px;color:#1e1e30">Not Started</div><div class="t" style="left:1342px;top:718px;color:#1e1e30">Low</div><div class="a" style="left:1420px;top:718px;width:13px;height:13px;border:1px solid #a5a6ac;background:linear-gradient(#f0f0f2,#ffffff)"></div><div class="a" style="left:75px;top:752px;width:49px;height:1px;background:#b4b5bb"></div><div class="a" style="left:161px;top:733px;width:512px;height:20px;border-left:1px solid #dcdde1;border-bottom:1px solid #dcdde1;border-top:1px solid #dcdde1"></div><div class="a" style="left:673px;top:752px;width:787px;height:1px;background:#dcdde1"></div><div class="t" style="left:165px;top:737px;color:#1e1e30">Write articles</div><div class="t" style="left:677px;top:737px;color:#1e1e30">Newsletter Staff, Marke...</div><div class="t r" style="left:966px;top:737px;width:100px;letter-spacing:0.15px;color:#1e1e30">02/01/2021</div><div class="t r" style="left:1049px;top:737px;width:100px;letter-spacing:0.15px;color:#1e1e30">02/14/2021</div><div class="t r" style="left:1095px;top:737px;width:100px;color:#1e1e30">$0.00</div><div class="t r" style="left:1155px;top:737px;width:100px;color:#1e1e30">0</div><div class="t" style="left:1262px;top:737px;color:#1e1e30">Not Started</div><div class="t" style="left:1342px;top:737px;color:#1e1e30">Low</div><div class="a" style="left:1420px;top:737px;width:13px;height:13px;border:1px solid #a5a6ac;background:linear-gradient(#f0f0f2,#ffffff)"></div><div class="a" style="left:75px;top:771px;width:49px;height:1px;background:#b4b5bb"></div><div class="a" style="left:161px;top:752px;width:512px;height:20px;border-left:1px solid #dcdde1;border-bottom:1px solid #dcdde1;border-top:1px solid #dcdde1"></div><div class="a" style="left:673px;top:771px;width:787px;height:1px;background:#dcdde1"></div><div class="t" style="left:165px;top:756px;color:#1e1e30">Take photos at company events</div><div class="t" style="left:677px;top:756px;color:#1e1e30">Newsletter Staff</div><div class="t r" style="left:966px;top:756px;width:100px;letter-spacing:0.15px;color:#1e1e30">01/26/2021</div><div class="t r" style="left:1049px;top:756px;width:100px;letter-spacing:0.15px;color:#1e1e30">03/01/2021</div><div class="t r" style="left:1095px;top:756px;width:100px;color:#1e1e30">$0.00</div><div class="t r" style="left:1155px;top:756px;width:100px;color:#1e1e30">0</div><div class="t" style="left:1262px;top:756px;color:#1e1e30">Not Started</div><div class="t" style="left:1342px;top:756px;color:#1e1e30">Low</div><div class="a" style="left:1420px;top:756px;width:13px;height:13px;border:1px solid #a5a6ac;background:linear-gradient(#f0f0f2,#ffffff)"></div><div class="a" style="left:75px;top:790px;width:49px;height:1px;background:#b4b5bb"></div><div class="a" style="left:161px;top:771px;width:512px;height:20px;border-left:1px solid #dcdde1;border-bottom:1px solid #dcdde1;border-top:1px solid #dcdde1"></div><div class="a" style="left:673px;top:790px;width:787px;height:1px;background:#dcdde1"></div><div class="t" style="left:165px;top:775px;color:#1e1e30">List general services on the back cover</div><div class="t" style="left:677px;top:775px;color:#1e1e30">Newsletter Staff</div><div class="t r" style="left:966px;top:775px;width:100px;letter-spacing:0.15px;color:#1e1e30">01/26/2021</div><div class="t r" style="left:1049px;top:775px;width:100px;letter-spacing:0.15px;color:#1e1e30">01/26/2021</div><div class="t r" style="left:1095px;top:775px;width:100px;color:#1e1e30">$0.00</div><div class="t r" style="left:1155px;top:775px;width:100px;color:#1e1e30">0</div><div class="t" style="left:1262px;top:775px;color:#1e1e30">Not Started</div><div class="t" style="left:1342px;top:775px;color:#1e1e30">Low</div><div class="a" style="left:1420px;top:775px;width:13px;height:13px;border:1px solid #a5a6ac;background:linear-gradient(#f0f0f2,#ffffff)"></div><div class="a" style="left:75px;top:809px;width:49px;height:1px;background:#b4b5bb"></div><div class="a" style="left:161px;top:790px;width:512px;height:20px;border-left:1px solid #dcdde1;border-bottom:1px solid #dcdde1;border-top:1px solid #dcdde1"></div><div class="a" style="left:673px;top:809px;width:787px;height:1px;background:#dcdde1"></div><div class="t" style="left:165px;top:794px;color:#1e1e30">Publish calendar of company events</div><div class="t" style="left:677px;top:794px;color:#1e1e30">Newsletter Staff</div><div class="t r" style="left:966px;top:794px;width:100px;letter-spacing:0.15px;color:#1e1e30">01/18/2021</div><div class="t r" style="left:1049px;top:794px;width:100px;letter-spacing:0.15px;color:#1e1e30">01/18/2021</div><div class="t r" style="left:1095px;top:794px;width:100px;color:#1e1e30">$0.00</div><div class="t r" style="left:1155px;top:794px;width:100px;color:#1e1e30">0</div><div class="t" style="left:1262px;top:794px;color:#1e1e30">Not Started</div><div class="t" style="left:1342px;top:794px;color:#1e1e30">Low</div><div class="a" style="left:1420px;top:794px;width:13px;height:13px;border:1px solid #a5a6ac;background:linear-gradient(#f0f0f2,#ffffff)"></div><div class="a" style="left:75px;top:828px;width:49px;height:1px;background:#b4b5bb"></div><div class="a" style="left:143px;top:809px;width:530px;height:20px;border-left:1px solid #dcdde1;border-bottom:1px solid #dcdde1;border-top:1px solid #dcdde1"></div><div class="a" style="left:673px;top:828px;width:787px;height:1px;background:#dcdde1"></div><svg class="ic" style="left:130px;top:819px" width="8" height="5"><path d="M0.5 0H7L3.75 3.8Z" fill="#7a7b80"/></svg><div class="t b" style="left:148px;top:813px;font-size:12px;color:#1e1e30">Edit newsletter</div><div class="t r b" style="left:966px;top:813px;width:100px;font-size:12px;letter-spacing:0.75px;color:#1e1e30">01/31/2021</div><div class="t r b" style="left:1049px;top:813px;width:100px;font-size:12px;letter-spacing:0.75px;color:#1e1e30">02/02/2021</div><div class="t r b" style="left:1095px;top:813px;width:100px;font-size:12px;color:#1e1e30">$0.00</div><div class="t r b" style="left:1155px;top:813px;width:100px;font-size:12px;color:#1e1e30">0</div><div class="t b" style="left:1262px;top:813px;font-size:12px;color:#1e1e30">Not Started</div><div class="t b" style="left:1342px;top:813px;font-size:12px;color:#1e1e30">Low</div><div class="a" style="left:1420px;top:813px;width:13px;height:13px;border:1px solid #a5a6ac;background:linear-gradient(#f0f0f2,#ffffff)"></div><div class="a" style="left:75px;top:847px;width:49px;height:1px;background:#b4b5bb"></div><div class="a" style="left:161px;top:828px;width:512px;height:20px;border-left:1px solid #dcdde1;border-bottom:1px solid #dcdde1;border-top:1px solid #dcdde1"></div><div class="a" style="left:673px;top:847px;width:787px;height:1px;background:#dcdde1"></div><div class="t" style="left:165px;top:832px;color:#1e1e30">Edit first draft of individual articles</div><div class="t" style="left:677px;top:832px;color:#1e1e30">Newsletter Staff</div><div class="t r" style="left:966px;top:832px;width:100px;letter-spacing:0.15px;color:#1e1e30">01/31/2021</div><div class="t r" style="left:1049px;top:832px;width:100px;letter-spacing:0.15px;color:#1e1e30">01/31/2021</div><div class="t r" style="left:1095px;top:832px;width:100px;color:#1e1e30">$0.00</div><div class="t r" style="left:1155px;top:832px;width:100px;color:#1e1e30">0</div><div class="t" style="left:1262px;top:832px;color:#1e1e30">Not Started</div><div class="t" style="left:1342px;top:832px;color:#1e1e30">Low</div><div class="a" style="left:1420px;top:832px;width:13px;height:13px;border:1px solid #a5a6ac;background:linear-gradient(#f0f0f2,#ffffff)"></div><div class="a" style="left:75px;top:866px;width:49px;height:1px;background:#b4b5bb"></div><div class="a" style="left:161px;top:847px;width:512px;height:20px;border-left:1px solid #dcdde1;border-bottom:1px solid #dcdde1;border-top:1px solid #dcdde1"></div><div class="a" style="left:673px;top:866px;width:787px;height:1px;background:#dcdde1"></div><div class="t" style="left:165px;top:851px;color:#1e1e30">Fact check</div><div class="t" style="left:677px;top:851px;color:#1e1e30">Newsletter Staff</div><div class="t r" style="left:966px;top:851px;width:100px;letter-spacing:0.15px;color:#1e1e30">02/01/2021</div><div class="t r" style="left:1049px;top:851px;width:100px;letter-spacing:0.15px;color:#1e1e30">02/01/2021</div><div class="t r" style="left:1095px;top:851px;width:100px;color:#1e1e30">$0.00</div><div class="t r" style="left:1155px;top:851px;width:100px;color:#1e1e30">0</div><div class="t" style="left:1262px;top:851px;color:#1e1e30">Not Started</div><div class="t" style="left:1342px;top:851px;color:#1e1e30">Low</div><div class="a" style="left:1420px;top:851px;width:13px;height:13px;border:1px solid #a5a6ac;background:linear-gradient(#f0f0f2,#ffffff)"></div><div class="a" style="left:75px;top:885px;width:49px;height:1px;background:#b4b5bb"></div><div class="a" style="left:161px;top:866px;width:512px;height:20px;border-left:1px solid #dcdde1;border-bottom:1px solid #dcdde1;border-top:1px solid #dcdde1"></div><div class="a" style="left:673px;top:885px;width:787px;height:1px;background:#dcdde1"></div><div class="t" style="left:165px;top:870px;color:#1e1e30">Evaluate balance of content</div><div class="t" style="left:677px;top:870px;color:#1e1e30">Newsletter Staff, Newsl...</div><div class="t r" style="left:966px;top:870px;width:100px;letter-spacing:0.15px;color:#1e1e30">02/02/2021</div><div class="t r" style="left:1049px;top:870px;width:100px;letter-spacing:0.15px;color:#1e1e30">02/02/2021</div><div class="t r" style="left:1095px;top:870px;width:100px;color:#1e1e30">$0.00</div><div class="t r" style="left:1155px;top:870px;width:100px;color:#1e1e30">0</div><div class="t" style="left:1262px;top:870px;color:#1e1e30">Not Started</div><div class="t" style="left:1342px;top:870px;color:#1e1e30">Low</div><div class="a" style="left:1420px;top:870px;width:13px;height:13px;border:1px solid #a5a6ac;background:linear-gradient(#f0f0f2,#ffffff)"></div><div class="a" style="left:75px;top:904px;width:49px;height:1px;background:#b4b5bb"></div><div class="a" style="left:143px;top:885px;width:530px;height:20px;border-left:1px solid #dcdde1;border-bottom:1px solid #dcdde1;border-top:1px solid #dcdde1"></div><div class="a" style="left:673px;top:904px;width:787px;height:1px;background:#dcdde1"></div><svg class="ic" style="left:130px;top:895px" width="8" height="5"><path d="M0.5 0H7L3.75 3.8Z" fill="#7a7b80"/></svg><div class="t b" style="left:148px;top:889px;font-size:12px;color:#1e1e30">Production</div><div class="t r b" style="left:966px;top:889px;width:100px;font-size:12px;letter-spacing:0.75px;color:#1e1e30">02/11/2021</div><div class="t r b" style="left:1049px;top:889px;width:100px;font-size:12px;letter-spacing:0.75px;color:#1e1e30">02/23/2021</div><div class="t r b" style="left:1095px;top:889px;width:100px;font-size:12px;color:#1e1e30">$0.00</div><div class="t r b" style="left:1155px;top:889px;width:100px;font-size:12px;color:#1e1e30">0</div><div class="t b" style="left:1262px;top:889px;font-size:12px;color:#1e1e30">Not Started</div><div class="t b" style="left:1342px;top:889px;font-size:12px;color:#1e1e30">Low</div><div class="a" style="left:1420px;top:889px;width:13px;height:13px;border:1px solid #a5a6ac;background:linear-gradient(#f0f0f2,#ffffff)"></div><div class="a" style="left:75px;top:923px;width:49px;height:1px;background:#b4b5bb"></div><div class="a" style="left:161px;top:904px;width:512px;height:20px;border-left:1px solid #dcdde1;border-bottom:1px solid #dcdde1;border-top:1px solid #dcdde1"></div><div class="a" style="left:673px;top:923px;width:787px;height:1px;background:#dcdde1"></div><div class="t" style="left:165px;top:908px;color:#1e1e30">Send deliverables date reminders to contributors</div><div class="t" style="left:677px;top:908px;color:#1e1e30">Newsletter Staff</div><div class="t r" style="left:966px;top:908px;width:100px;letter-spacing:0.15px;color:#1e1e30">02/21/2021</div><div class="t r" style="left:1049px;top:908px;width:100px;letter-spacing:0.15px;color:#1e1e30">02/21/2021</div><div class="t r" style="left:1095px;top:908px;width:100px;color:#1e1e30">$0.00</div><div class="t r" style="left:1155px;top:908px;width:100px;color:#1e1e30">0</div><div class="t" style="left:1262px;top:908px;color:#1e1e30">Not Started</div><div class="t" style="left:1342px;top:908px;color:#1e1e30">Low</div><div class="a" style="left:1420px;top:908px;width:13px;height:13px;border:1px solid #a5a6ac;background:linear-gradient(#f0f0f2,#ffffff)"></div><div class="a" style="left:75px;top:942px;width:49px;height:1px;background:#b4b5bb"></div><div class="a" style="left:161px;top:923px;width:512px;height:20px;border-left:1px solid #dcdde1;border-bottom:1px solid #dcdde1;border-top:1px solid #dcdde1"></div><div class="a" style="left:673px;top:942px;width:787px;height:1px;background:#dcdde1"></div><div class="t" style="left:165px;top:927px;color:#1e1e30">Send color and text specs to printers</div><div class="t" style="left:677px;top:927px;color:#1e1e30">Newsletter Manager</div><div class="t r" style="left:966px;top:927px;width:100px;letter-spacing:0.15px;color:#1e1e30">02/22/2021</div><div class="t r" style="left:1049px;top:927px;width:100px;letter-spacing:0.15px;color:#1e1e30">02/22/2021</div><div class="t r" style="left:1095px;top:927px;width:100px;color:#1e1e30">$0.00</div><div class="t r" style="left:1155px;top:927px;width:100px;color:#1e1e30">0</div><div class="t" style="left:1262px;top:927px;color:#1e1e30">Not Started</div><div class="t" style="left:1342px;top:927px;color:#1e1e30">Low</div><div class="a" style="left:1420px;top:927px;width:13px;height:13px;border:1px solid #a5a6ac;background:linear-gradient(#f0f0f2,#ffffff)"></div><div class="a" style="left:75px;top:961px;width:49px;height:1px;background:#b4b5bb"></div><div class="a" style="left:161px;top:942px;width:512px;height:20px;border-left:1px solid #dcdde1;border-bottom:1px solid #dcdde1;border-top:1px solid #dcdde1"></div><div class="a" style="left:673px;top:961px;width:787px;height:1px;background:#dcdde1"></div><div class="t" style="left:165px;top:946px;color:#1e1e30">Deliver computer files 10 days before printing</div><div class="t" style="left:677px;top:946px;color:#1e1e30">Newsletter Staff</div><div class="t r" style="left:966px;top:946px;width:100px;letter-spacing:0.15px;color:#1e1e30">02/23/2021</div><div class="t r" style="left:1049px;top:946px;width:100px;letter-spacing:0.15px;color:#1e1e30">02/23/2021</div><div class="t r" style="left:1095px;top:946px;width:100px;color:#1e1e30">$0.00</div><div class="t r" style="left:1155px;top:946px;width:100px;color:#1e1e30">0</div><div class="t" style="left:1262px;top:946px;color:#1e1e30">Not Started</div><div class="t" style="left:1342px;top:946px;color:#1e1e30">Low</div><div class="a" style="left:1420px;top:946px;width:13px;height:13px;border:1px solid #a5a6ac;background:linear-gradient(#f0f0f2,#ffffff)"></div><div class="a" style="left:75px;top:980px;width:49px;height:1px;background:#b4b5bb"></div><div class="a" style="left:161px;top:961px;width:512px;height:20px;border-left:1px solid #dcdde1;border-bottom:1px solid #dcdde1;border-top:1px solid #dcdde1"></div><div class="a" style="left:673px;top:980px;width:787px;height:1px;background:#dcdde1"></div><div class="t" style="left:165px;top:965px;color:#1e1e30">Order quality paper</div><div class="t" style="left:677px;top:965px;color:#1e1e30">Printing Company</div><div class="t r" style="left:966px;top:965px;width:100px;letter-spacing:0.15px;color:#1e1e30">02/11/2021</div><div class="t r" style="left:1049px;top:965px;width:100px;letter-spacing:0.15px;color:#1e1e30">02/11/2021</div><div class="t r" style="left:1095px;top:965px;width:100px;color:#1e1e30">$0.00</div><div class="t r" style="left:1155px;top:965px;width:100px;color:#1e1e30">0</div><div class="t" style="left:1262px;top:965px;color:#1e1e30">Not Started</div><div class="t" style="left:1342px;top:965px;color:#1e1e30">Low</div><div class="a" style="left:1420px;top:965px;width:13px;height:13px;border:1px solid #a5a6ac;background:linear-gradient(#f0f0f2,#ffffff)"></div><div class="a" style="left:75px;top:999px;width:49px;height:1px;background:#b4b5bb"></div><div class="a" style="left:143px;top:980px;width:530px;height:20px;border-left:1px solid #dcdde1;border-bottom:1px solid #dcdde1;border-top:1px solid #dcdde1"></div><div class="a" style="left:673px;top:999px;width:787px;height:1px;background:#dcdde1"></div><svg class="ic" style="left:130px;top:990px" width="8" height="5"><path d="M0.5 0H7L3.75 3.8Z" fill="#7a7b80"/></svg><div class="t b" style="left:148px;top:984px;font-size:12px;color:#1e1e30">Publish and distribute newsletter</div><div class="t r b" style="left:966px;top:984px;width:100px;font-size:12px;letter-spacing:0.75px;color:#1e1e30">02/07/2021</div><div class="t r b" style="left:1049px;top:984px;width:100px;font-size:12px;letter-spacing:0.75px;color:#1e1e30">02/10/2021</div><div class="t r b" style="left:1095px;top:984px;width:100px;font-size:12px;color:#1e1e30">$0.00</div><div class="t r b" style="left:1155px;top:984px;width:100px;font-size:12px;color:#1e1e30">0</div><div class="t b" style="left:1262px;top:984px;font-size:12px;color:#1e1e30">Not Started</div><div class="t b" style="left:1342px;top:984px;font-size:12px;color:#1e1e30">Low</div><div class="a" style="left:1420px;top:984px;width:13px;height:13px;border:1px solid #a5a6ac;background:linear-gradient(#f0f0f2,#ffffff)"></div><div class="a" style="left:75px;top:1018px;width:49px;height:1px;background:#b4b5bb"></div><div class="a" style="left:161px;top:999px;width:512px;height:20px;border-left:1px solid #dcdde1;border-bottom:1px solid #dcdde1;border-top:1px solid #dcdde1"></div><div class="a" style="left:673px;top:1018px;width:787px;height:1px;background:#dcdde1"></div><div class="t" style="left:165px;top:1003px;color:#1e1e30">Develop distribution list</div><div class="t" style="left:677px;top:1003px;color:#1e1e30">Newsletter Manager, N...</div><div class="t r" style="left:966px;top:1003px;width:100px;letter-spacing:0.15px;color:#1e1e30">02/07/2021</div><div class="t r" style="left:1049px;top:1003px;width:100px;letter-spacing:0.15px;color:#1e1e30">02/08/2021</div><div class="t r" style="left:1095px;top:1003px;width:100px;color:#1e1e30">$0.00</div><div class="t r" style="left:1155px;top:1003px;width:100px;color:#1e1e30">0</div><div class="t" style="left:1262px;top:1003px;color:#1e1e30">Not Started</div><div class="t" style="left:1342px;top:1003px;color:#1e1e30">Low</div><div class="a" style="left:1420px;top:1003px;width:13px;height:13px;border:1px solid #a5a6ac;background:linear-gradient(#f0f0f2,#ffffff)"></div><div class="a" style="left:75px;top:1037px;width:49px;height:1px;background:#b4b5bb"></div><div class="a" style="left:161px;top:1018px;width:512px;height:20px;border-left:1px solid #dcdde1;border-bottom:1px solid #dcdde1;border-top:1px solid #dcdde1"></div><div class="a" style="left:673px;top:1037px;width:787px;height:1px;background:#dcdde1"></div><div class="t" style="left:165px;top:1022px;color:#1e1e30">Print and bind newsletters</div><div class="t" style="left:677px;top:1022px;color:#1e1e30">Printing Company</div><div class="t r" style="left:966px;top:1022px;width:100px;letter-spacing:0.15px;color:#1e1e30">02/08/2021</div><div class="t r" style="left:1049px;top:1022px;width:100px;letter-spacing:0.15px;color:#1e1e30">02/08/2021</div><div class="t r" style="left:1095px;top:1022px;width:100px;color:#1e1e30">$0.00</div><div class="t r" style="left:1155px;top:1022px;width:100px;color:#1e1e30">0</div><div class="t" style="left:1262px;top:1022px;color:#1e1e30">Not Started</div><div class="t" style="left:1342px;top:1022px;color:#1e1e30">Low</div><div class="a" style="left:1420px;top:1022px;width:13px;height:13px;border:1px solid #a5a6ac;background:linear-gradient(#f0f0f2,#ffffff)"></div><div class="a" style="left:75px;top:1056px;width:49px;height:1px;background:#b4b5bb"></div><div class="a" style="left:161px;top:1037px;width:512px;height:20px;border-left:1px solid #dcdde1;border-bottom:1px solid #dcdde1;border-top:1px solid #dcdde1"></div><div class="a" style="left:673px;top:1056px;width:787px;height:1px;background:#dcdde1"></div><div class="t" style="left:165px;top:1041px;color:#1e1e30">Distribute newsletters</div><div class="t" style="left:677px;top:1041px;color:#1e1e30">Newsletter Staff</div><div class="t r" style="left:966px;top:1041px;width:100px;letter-spacing:0.15px;color:#1e1e30">02/09/2021</div><div class="t r" style="left:1049px;top:1041px;width:100px;letter-spacing:0.15px;color:#1e1e30">02/10/2021</div><div class="t r" style="left:1095px;top:1041px;width:100px;color:#1e1e30">$0.00</div><div class="t r" style="left:1155px;top:1041px;width:100px;color:#1e1e30">0</div><div class="t" style="left:1262px;top:1041px;color:#1e1e30">Not Started</div><div class="t" style="left:1342px;top:1041px;color:#1e1e30">Low</div><div class="a" style="left:1420px;top:1041px;width:13px;height:13px;border:1px solid #a5a6ac;background:linear-gradient(#f0f0f2,#ffffff)"></div><div class="a" style="left:673px;top:335px;width:1px;height:722px;background:#dcdde1"></div><div class="a" style="left:809px;top:335px;width:1px;height:722px;background:#dcdde1"></div><div class="a" style="left:986px;top:335px;width:1px;height:722px;background:#dcdde1"></div><div class="a" style="left:1069px;top:335px;width:1px;height:722px;background:#dcdde1"></div><div class="a" style="left:1152px;top:335px;width:1px;height:722px;background:#dcdde1"></div><div class="a" style="left:1198px;top:335px;width:1px;height:722px;background:#dcdde1"></div><div class="a" style="left:1258px;top:335px;width:1px;height:722px;background:#dcdde1"></div><div class="a" style="left:1338px;top:335px;width:1px;height:722px;background:#dcdde1"></div><div class="a" style="left:1393px;top:335px;width:1px;height:722px;background:#dcdde1"></div><div class="a" style="left:1459px;top:335px;width:1px;height:722px;background:#dcdde1"></div><div class="a" style="left:75px;top:1235px;width:2481px;height:29px;background:linear-gradient(#ebebef,#e2e3e7);border-top:1px solid #b9bac0"></div><div class="a" style="left:1155px;top:1238px;width:43px;height:24px;background:#fff;border:1px solid #d7d8dc"></div><div class="t r" style="left:1094px;top:1245px;width:100px">$0.00</div><div class="a" style="left:85px;top:1276px;width:2470px;height:1px;background:linear-gradient(90deg,rgba(200,201,207,0),#c8c9cf 8%,#c8c9cf 92%,rgba(200,201,207,0))"></div><div class="a" style="left:85px;top:1277px;width:2470px;height:1px;background:#f8f8fa"></div><div class="a" style="left:98px;top:1313px;width:99px;height:23px;border:1px solid #aeafb5;border-radius:3px;background:linear-gradient(#eff0f3,#dfe0e5)"></div><div class="rl" style="left:98px;top:1319px;width:99px">Advisor</div><div class="a" style="left:2331px;top:1313px;width:99px;height:23px;border:1px solid #aeafb5;border-radius:3px;background:linear-gradient(#eff0f3,#dfe0e5)"></div><div class="rl" style="left:2331px;top:1319px;width:99px">Back</div><div class="a" style="left:2451px;top:1313px;width:91px;height:23px;border:1px solid #aeafb5;border-radius:3px;background:linear-gradient(#eff0f3,#dfe0e5)"></div><div class="rl" style="left:2451px;top:1319px;width:91px">Next</div><div class="a" style="left:0;top:1373px;width:2560px;height:14px;background:linear-gradient(#dcdde2,#d0d1d7);border-top:1px solid #bfc0c6"></div></body></html>
